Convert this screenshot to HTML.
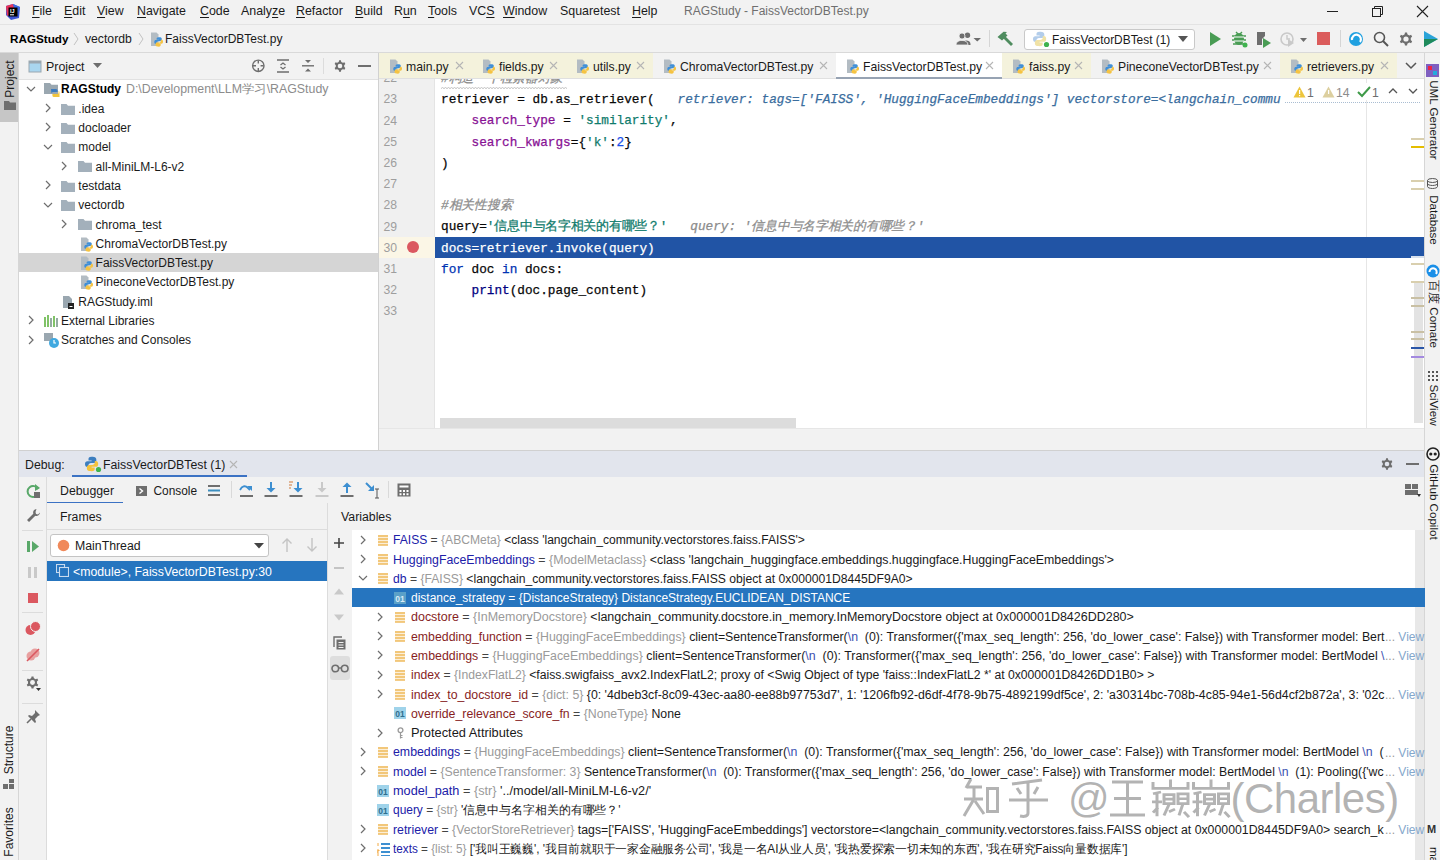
<!DOCTYPE html>
<html><head><meta charset="utf-8"><title>IDE</title><style>
*{box-sizing:border-box}
body{margin:0;width:1440px;height:860px;overflow:hidden;background:#f2f2f2;font-family:"Liberation Sans",sans-serif;font-size:12px;color:#000;position:relative}
.a{position:absolute}
.t{position:absolute;white-space:pre;overflow:visible}
.m{font-family:"Liberation Mono",monospace;-webkit-text-stroke:0.25px currentColor}
.cj{display:inline-block;overflow:hidden;white-space:nowrap;vertical-align:top}
.c{display:inline-block;text-align:center}
u{text-decoration:underline;text-underline-offset:2px}
</style></head><body>
<div class="a" style="left:0px;top:0px;width:1440px;height:24px;background:#f2f2f2;"></div>
<div class="a" style="left:0px;top:24px;width:1440px;height:1px;background:#e3e3e3;"></div>
<svg class="a" style="left:4px;top:3px;" width="18" height="18" viewBox="0 0 18 18"><path d="M2 3l7-2 7 3-1 11-8 2-5-5z" fill="#3d55d6"/><path d="M2 3l7-2 2 8-8 4z" fill="#e8335a"/><path d="M9 1l7 3-3 9z" fill="#3a6be0"/><rect x="4.5" y="4.5" width="9" height="9" fill="#000"/><rect x="6" y="11.3" width="4" height="1" fill="#fff"/><text x="6" y="10" font-size="5.5" font-weight="bold" fill="#fff" font-family="Liberation Sans">IJ</text></svg>
<div class="t" style="left:32px;top:-0.6px;height:24px;line-height:24px;font-size:12.4px;color:#1a1a1a;"><u>F</u>ile</div>
<div class="t" style="left:64px;top:-0.6px;height:24px;line-height:24px;font-size:12.4px;color:#1a1a1a;"><u>E</u>dit</div>
<div class="t" style="left:97px;top:-0.6px;height:24px;line-height:24px;font-size:12.4px;color:#1a1a1a;"><u>V</u>iew</div>
<div class="t" style="left:137px;top:-0.6px;height:24px;line-height:24px;font-size:12.4px;color:#1a1a1a;"><u>N</u>avigate</div>
<div class="t" style="left:200px;top:-0.6px;height:24px;line-height:24px;font-size:12.4px;color:#1a1a1a;"><u>C</u>ode</div>
<div class="t" style="left:241px;top:-0.6px;height:24px;line-height:24px;font-size:12.4px;color:#1a1a1a;">Analy<u>z</u>e</div>
<div class="t" style="left:296px;top:-0.6px;height:24px;line-height:24px;font-size:12.4px;color:#1a1a1a;"><u>R</u>efactor</div>
<div class="t" style="left:355px;top:-0.6px;height:24px;line-height:24px;font-size:12.4px;color:#1a1a1a;"><u>B</u>uild</div>
<div class="t" style="left:394px;top:-0.6px;height:24px;line-height:24px;font-size:12.4px;color:#1a1a1a;">R<u>u</u>n</div>
<div class="t" style="left:428px;top:-0.6px;height:24px;line-height:24px;font-size:12.4px;color:#1a1a1a;"><u>T</u>ools</div>
<div class="t" style="left:469px;top:-0.6px;height:24px;line-height:24px;font-size:12.4px;color:#1a1a1a;">VC<u>S</u></div>
<div class="t" style="left:503px;top:-0.6px;height:24px;line-height:24px;font-size:12.4px;color:#1a1a1a;"><u>W</u>indow</div>
<div class="t" style="left:560px;top:-0.6px;height:24px;line-height:24px;font-size:12.4px;color:#1a1a1a;">Squaretest</div>
<div class="t" style="left:632px;top:-0.6px;height:24px;line-height:24px;font-size:12.4px;color:#1a1a1a;"><u>H</u>elp</div>
<div class="t" style="left:684px;top:-0.8px;height:24px;line-height:24px;font-size:12.0px;color:#6f6f6f;">RAGStudy - FaissVectorDBTest.py</div>
<div class="a" style="left:1327px;top:11px;width:11px;height:1px;background:#222;"></div>
<svg class="a" style="left:1371px;top:5px;" width="13" height="13" viewBox="0 0 13 13"><rect x="1.5" y="3.5" width="8" height="8" fill="none" stroke="#222"/><path d="M3.5 3.5V1.5h8v8h-2" fill="none" stroke="#222"/></svg>
<svg class="a" style="left:1416px;top:5px;" width="13" height="13" viewBox="0 0 13 13"><path d="M1 1L12 12M12 1L1 12" stroke="#222" stroke-width="1.1"/></svg>
<div class="a" style="left:0px;top:25px;width:1440px;height:28px;background:#f2f2f2;"></div>
<div class="a" style="left:0px;top:52px;width:1440px;height:1px;background:#d9d9d9;"></div>
<div class="t" style="left:10px;top:24.9px;height:28px;line-height:28px;font-size:11.7px;color:#000;font-weight:bold">RAGStudy</div>
<svg class="a" style="left:73px;top:32px;" width="6" height="14" viewBox="0 0 6 14"><polyline points="1,1 5,7 1,13" fill="none" stroke="#c2c2c2" stroke-width="1"/></svg>
<div class="t" style="left:85px;top:24.9px;height:28px;line-height:28px;font-size:12.2px;color:#1a1a1a;">vectordb</div>
<svg class="a" style="left:138px;top:32px;" width="6" height="14" viewBox="0 0 6 14"><polyline points="1,1 5,7 1,13" fill="none" stroke="#c2c2c2" stroke-width="1"/></svg>
<svg class="a" style="left:150px;top:32px;" width="15" height="15" viewBox="0 0 15 15"><path d="M1 0.5h5.5l2 2v11.5H1z" fill="#b3bcc3"/><g transform="translate(4.3,4.6) scale(0.66)"><path d="M6.5 0.8c-2.6 0-3 1.1-3 2.4v1.4h3.1v.6H2.3C1 5.2 0 6.1 0 8.1s.9 3 2.3 3h1.1V9.5c0-1.4 1.2-2.5 2.6-2.5h3.1c1.2 0 2.2-1 2.2-2.2V3.2c0-1.2-1-2.1-2.2-2.3-.8-.1-1.7-.1-2.6-.1z" fill="#3f8fd8"/><path d="M6.7 15.2c2.6 0 3-1.1 3-2.4v-1.4H6.6v-.6h4.3c1.3 0 2.300-.9 2.3-2.9s-.9-3-2.3-3H9.8v1.6c0 1.4-1.2 2.5-2.6 2.5H4.1c-1.2 0-2.2 1-2.2 2.2v1.6c0 1.2 1 2.1 2.2 2.3.8.1 1.7.1 2.6.1z" fill="#f5c342"/></g></svg>
<div class="t" style="left:165px;top:24.9px;height:28px;line-height:28px;font-size:12.0px;color:#1a1a1a;">FaissVectorDBTest.py</div>
<svg class="a" style="left:956px;top:31px;" width="26" height="15" viewBox="0 0 26 15"><circle cx="11.5" cy="4.2" r="2.7" fill="#6e6e6e"/><path d="M9 9.5c2.5-.5 5.5.5 5.5 3.5v1H11z" fill="#6e6e6e"/><circle cx="6" cy="5" r="3" fill="#6e6e6e" stroke="#f2f2f2" stroke-width="0.8"/><path d="M0 14c0-3 2.5-4.6 6-4.6s6 1.6 6 4.6z" fill="#6e6e6e" stroke="#f2f2f2" stroke-width="0.8"/><path d="M17.5 7h7.5l-3.75 3.5z" fill="#6e6e6e"/></svg>
<div class="a" style="left:989px;top:30px;width:1px;height:17px;background:#d5d5d5;"></div>
<svg class="a" style="left:997px;top:31px;" width="18" height="16" viewBox="0 0 18 16"><path d="M0.5 6L6.5 0.8 10 1 8.5 2.5 10.5 4.5 5 9.5z" fill="#4f8c5f"/><path d="M7.5 6.5L15 14" stroke="#4f8c5f" stroke-width="2.8"/></svg>
<div class="a" style="left:1024px;top:29px;width:171px;height:21px;background:#fff;border:1px solid #c9c9c9;border-radius:3px"></div>
<svg class="a" style="left:1033px;top:31px;" width="17" height="17" viewBox="0 0 17 17"><path d="M6.5 0.8c-2.6 0-3 1.1-3 2.4v1.4h3.1v.6H2.3C1 5.2 0 6.1 0 8.1s.9 3 2.3 3h1.1V9.5c0-1.4 1.2-2.5 2.6-2.5h3.1c1.2 0 2.2-1 2.2-2.2V3.2c0-1.2-1-2.1-2.2-2.3-.8-.1-1.7-.1-2.6-.1z" fill="#b3cdea"/><path d="M6.7 15.2c2.6 0 3-1.1 3-2.4v-1.4H6.6v-.6h4.3c1.3 0 2.3-.9 2.3-2.9s-.9-3-2.3-3H9.8v1.6c0 1.4-1.2 2.5-2.6 2.5H4.1c-1.2 0-2.2 1-2.2 2.2v1.6c0 1.2 1 2.1 2.2 2.3.8.1 1.7.1 2.6.1z" fill="#f0e2a6"/><circle cx="13.5" cy="13.5" r="2.6" fill="#3fb34f"/></svg>
<div class="t" style="left:1052px;top:30.2px;height:21px;line-height:21px;font-size:11.9px;color:#1a1a1a;">FaissVectorDBTest (1)</div>
<svg class="a" style="left:1178px;top:36px;" width="11" height="7" viewBox="0 0 11 7"><path d="M0 0h10l-5 6z" fill="#555"/></svg>
<svg class="a" style="left:1208px;top:31px;" width="14" height="16" viewBox="0 0 14 16"><path d="M2 1l11 7-11 7z" fill="#499c54"/></svg>
<svg class="a" style="left:1231px;top:30px;" width="17" height="18" viewBox="0 0 17 18"><ellipse cx="8" cy="9" rx="5" ry="6" fill="#499c54"/><path d="M1 6h14M1 10h14M2 14h12M5 2l2 2M11 2l-2 2" stroke="#499c54" stroke-width="1.4"/><path d="M3 7h10M3 11h10" stroke="#fff" stroke-width="1"/><circle cx="14" cy="15" r="2.5" fill="#3fb34f"/></svg>
<svg class="a" style="left:1255px;top:30px;" width="17" height="18" viewBox="0 0 17 18"><path d="M2 2h8v4l-3 3v6H2z" fill="#6e6e6e"/><path d="M8 8l8 5-8 5z" fill="#499c54"/></svg>
<svg class="a" style="left:1279px;top:30px;" width="30" height="18" viewBox="0 0 30 18"><circle cx="8" cy="9" r="6" fill="none" stroke="#c9c9c9" stroke-width="1.6"/><path d="M8 5v4h3" stroke="#c9c9c9" stroke-width="1.4" fill="none"/><path d="M9 9l6 4-6 4z" fill="#c9c9c9"/><path d="M21 8h7l-3.5 4z" fill="#6e6e6e"/></svg>
<div class="a" style="left:1317px;top:32px;width:13px;height:13px;background:#db5c5c;"></div>
<div class="a" style="left:1340px;top:30px;width:1px;height:17px;background:#d5d5d5;"></div>
<svg class="a" style="left:1348px;top:31px;" width="16" height="16" viewBox="0 0 16 16"><circle cx="8" cy="8" r="7" fill="#1fa0e0"/><path d="M4 9a4.5 4.5 0 1 1 8 2" stroke="#fff" stroke-width="2.2" fill="none"/></svg>
<svg class="a" style="left:1373px;top:31px;" width="16" height="16" viewBox="0 0 16 16"><circle cx="6.5" cy="6.5" r="5" fill="none" stroke="#555" stroke-width="1.6"/><path d="M10 10l5 5" stroke="#555" stroke-width="2"/></svg>
<svg class="a" style="left:1398px;top:31px;" width="16" height="16" viewBox="0 0 16 16"><path d="M6.66 3.16 L6.94 1.53 L9.06 1.53 L9.34 3.16 L10.36 3.91 L11.52 4.42 L13.08 3.85 L14.14 5.68 L12.86 6.74 L12.72 8.00 L12.86 9.26 L14.14 10.32 L13.08 12.15 L11.52 11.58 L10.36 12.09 L9.34 12.84 L9.06 14.47 L6.94 14.47 L6.66 12.84 L5.64 12.09 L4.48 11.58 L2.92 12.15 L1.86 10.32 L3.14 9.26 L3.28 8.00 L3.14 6.74 L1.86 5.68 L2.92 3.85 L4.48 4.42 L5.64 3.91Z" fill="#6e6e6e"/><circle cx="8.0" cy="8.0" r="2.62" fill="#f2f2f2"/></svg>
<svg class="a" style="left:1422px;top:30px;" width="18" height="18" viewBox="0 0 18 18"><path d="M2 1l14 8-14 8z" fill="#2aa3d8"/><path d="M2 9l14 0-14 8z" fill="#1f8a5a"/></svg>
<div class="a" style="left:0px;top:53px;width:19px;height:807px;background:#f2f2f2;"></div>
<div class="a" style="left:18px;top:53px;width:1px;height:807px;background:#d6d6d6;"></div>
<div class="a" style="left:0px;top:53px;width:18px;height:69px;background:#c6c6c6;"></div>
<div class="t" style="left:-21px;top:70.2px;height:18px;line-height:18px;font-size:12px;color:#1a1a1a;transform:rotate(-90deg);transform-origin:center;width:62px;text-align:center">Project</div>
<svg class="a" style="left:4px;top:101px;" width="12" height="9" viewBox="0 0 12 9"><path d="M0 0h5l1 1.5h6V10H0z" fill="#6e6e6e"/></svg>
<div class="t" style="left:-25px;top:741.2px;height:18px;line-height:18px;font-size:12px;color:#1a1a1a;transform:rotate(-90deg);width:68px;text-align:center">Structure</div>
<svg class="a" style="left:3px;top:779px;" width="12" height="10" viewBox="0 0 12 10"><rect x="0" y="5" width="5" height="5" fill="#6e6e6e"/><rect x="6" y="5" width="5" height="5" fill="#6e6e6e"/><rect x="6" y="0" width="5" height="4" fill="#6e6e6e"/></svg>
<div class="t" style="left:-22px;top:823.2px;height:18px;line-height:18px;font-size:12px;color:#1a1a1a;transform:rotate(-90deg);width:62px;text-align:center">Favorites</div>
<div class="a" style="left:19px;top:53px;width:359px;height:26px;background:#f2f2f2;"></div>
<div class="a" style="left:19px;top:79px;width:359px;height:1px;background:#e1e1e1;"></div>
<div class="a" style="left:19px;top:80px;width:359px;height:370px;background:#ffffff;"></div>
<div class="a" style="left:378px;top:53px;width:1px;height:397px;background:#d1d1d1;"></div>
<svg class="a" style="left:28px;top:60px;" width="14" height="13" viewBox="0 0 14 13"><rect x="0.5" y="0.5" width="13" height="12" fill="#9aa7b0"/><rect x="1.5" y="3.5" width="11" height="8" fill="#a9d6ef"/></svg>
<div class="t" style="left:46px;top:54.2px;height:26px;line-height:26px;font-size:12.4px;color:#1a1a1a;">Project</div>
<svg class="a" style="left:93px;top:63px;" width="10" height="6" viewBox="0 0 10 6"><path d="M0 0h9l-4.5 5z" fill="#6e6e6e"/></svg>
<svg class="a" style="left:251px;top:59px;" width="15" height="14" viewBox="0 0 15 14"><circle cx="7.3" cy="6.8" r="5.7" fill="none" stroke="#6e6e6e" stroke-width="1.4"/><path d="M7.3 1.5v3M7.3 9v3M2 6.8h3M9.6 6.8h3" stroke="#6e6e6e" stroke-width="1.4"/></svg>
<svg class="a" style="left:277px;top:59px;" width="12" height="14" viewBox="0 0 12 14"><path d="M0 1h12M0 13h12" stroke="#6e6e6e" stroke-width="1.4"/><path d="M3.5 6l2.5-2 2.5 2M3.5 8l2.5 2 2.5-2" stroke="#6e6e6e" stroke-width="1.3" fill="none"/></svg>
<svg class="a" style="left:302px;top:59px;" width="12" height="14" viewBox="0 0 12 14"><path d="M0 6.8h12" stroke="#6e6e6e" stroke-width="1.4"/><path d="M3 1h6L6 4zM3 12.6h6L6 9.6z" fill="#6e6e6e"/></svg>
<div class="a" style="left:323px;top:58px;width:1px;height:16px;background:#dcdcdc;"></div>
<svg class="a" style="left:333px;top:59px;" width="14" height="14" viewBox="0 0 14 14"><path d="M5.82 2.73 L6.07 1.34 L7.93 1.34 L8.18 2.73 L9.07 3.42 L10.11 3.84 L11.44 3.37 L12.37 4.97 L11.29 5.89 L11.13 7.00 L11.29 8.11 L12.37 9.03 L11.44 10.63 L10.11 10.16 L9.07 10.58 L8.18 11.27 L7.93 12.66 L6.07 12.66 L5.82 11.27 L4.93 10.58 L3.89 10.16 L2.56 10.63 L1.63 9.03 L2.71 8.11 L2.87 7.00 L2.71 5.89 L1.63 4.97 L2.56 3.37 L3.89 3.84 L4.93 3.42Z" fill="#6e6e6e"/><circle cx="7.0" cy="7.0" r="2.30" fill="#f2f2f2"/></svg>
<div class="a" style="left:358px;top:65px;width:13px;height:1.6px;background:#6e6e6e;"></div>
<svg class="a" style="left:26.0px;top:85.0px;" width="10" height="8" viewBox="0 0 10 8"><polyline points="1,2 5,6 9,2" fill="none" stroke="#6e6e6e" stroke-width="1.2"/></svg>
<svg class="a" style="left:44px;top:81.2px;" width="16" height="16" viewBox="0 0 16 16"><path d="M0 2h6l1.5 1.8H14V13H0z" fill="#9aa7b0"/><path d="M7 8h5a1.6 1.6 0 0 1 1.6 1.6V11H9a1.6 1.6 0 0 0-1.6 1.6z" fill="#3b7bbf"/><path d="M15.5 16H10a1.6 1.6 0 0 1-1.6-1.6V13H13a1.6 1.6 0 0 0 1.6-1.6V10a1.5 1.5 0 0 1 .9 1.4z" fill="#f2c53d"/></svg>
<div class="t" style="left:61.0px;top:80.4px;height:19.3px;line-height:19.3px;font-size:12px;color:#000;font-weight:bold">RAGStudy</div>
<div class="t" style="left:126px;top:80.4px;height:19.3px;line-height:19.3px;font-size:12px;color:#8c8c8c;transform:scaleX(1.029);transform-origin:0 0">D:\Development\LLM<span class="c" style="width:12px">学</span><span class="c" style="width:12px">习</span>\RAGStudy</div>
<svg class="a" style="left:43.5px;top:103.1px;" width="8" height="10" viewBox="0 0 8 10"><polyline points="2,1 6,5 2,9" fill="none" stroke="#6e6e6e" stroke-width="1.2"/></svg>
<svg class="a" style="left:61px;top:102.5px;" width="14" height="12" viewBox="0 0 14 12"><path d="M0 1h5.5l1.5 1.8H14V12H0z" fill="#a3b0bb"/></svg>
<div class="t" style="left:78.3px;top:99.7px;height:19.3px;line-height:19.3px;font-size:12px;color:#1a1a1a;">.idea</div>
<svg class="a" style="left:43.5px;top:122.4px;" width="8" height="10" viewBox="0 0 8 10"><polyline points="2,1 6,5 2,9" fill="none" stroke="#6e6e6e" stroke-width="1.2"/></svg>
<svg class="a" style="left:61px;top:121.80000000000001px;" width="14" height="12" viewBox="0 0 14 12"><path d="M0 1h5.5l1.5 1.8H14V12H0z" fill="#a3b0bb"/></svg>
<div class="t" style="left:78.3px;top:119.0px;height:19.3px;line-height:19.3px;font-size:12px;color:#1a1a1a;">docloader</div>
<svg class="a" style="left:42.5px;top:142.90000000000003px;" width="10" height="8" viewBox="0 0 10 8"><polyline points="1,2 5,6 9,2" fill="none" stroke="#6e6e6e" stroke-width="1.2"/></svg>
<svg class="a" style="left:61px;top:141.10000000000002px;" width="14" height="12" viewBox="0 0 14 12"><path d="M0 1h5.5l1.5 1.8H14V12H0z" fill="#a3b0bb"/></svg>
<div class="t" style="left:78.3px;top:138.3px;height:19.3px;line-height:19.3px;font-size:12px;color:#1a1a1a;">model</div>
<svg class="a" style="left:60.0px;top:161.0px;" width="8" height="10" viewBox="0 0 8 10"><polyline points="2,1 6,5 2,9" fill="none" stroke="#6e6e6e" stroke-width="1.2"/></svg>
<svg class="a" style="left:78px;top:160.4px;" width="14" height="12" viewBox="0 0 14 12"><path d="M0 1h5.5l1.5 1.8H14V12H0z" fill="#a3b0bb"/></svg>
<div class="t" style="left:95.6px;top:157.6px;height:19.3px;line-height:19.3px;font-size:12px;color:#1a1a1a;">all-MiniLM-L6-v2</div>
<svg class="a" style="left:43.5px;top:180.29999999999998px;" width="8" height="10" viewBox="0 0 8 10"><polyline points="2,1 6,5 2,9" fill="none" stroke="#6e6e6e" stroke-width="1.2"/></svg>
<svg class="a" style="left:61px;top:179.7px;" width="14" height="12" viewBox="0 0 14 12"><path d="M0 1h5.5l1.5 1.8H14V12H0z" fill="#a3b0bb"/></svg>
<div class="t" style="left:78.3px;top:176.9px;height:19.3px;line-height:19.3px;font-size:12px;color:#1a1a1a;">testdata</div>
<svg class="a" style="left:42.5px;top:200.8px;" width="10" height="8" viewBox="0 0 10 8"><polyline points="1,2 5,6 9,2" fill="none" stroke="#6e6e6e" stroke-width="1.2"/></svg>
<svg class="a" style="left:61px;top:199.0px;" width="14" height="12" viewBox="0 0 14 12"><path d="M0 1h5.5l1.5 1.8H14V12H0z" fill="#a3b0bb"/></svg>
<div class="t" style="left:78.3px;top:196.2px;height:19.3px;line-height:19.3px;font-size:12px;color:#1a1a1a;">vectordb</div>
<svg class="a" style="left:60.0px;top:218.9px;" width="8" height="10" viewBox="0 0 8 10"><polyline points="2,1 6,5 2,9" fill="none" stroke="#6e6e6e" stroke-width="1.2"/></svg>
<svg class="a" style="left:78px;top:218.3px;" width="14" height="12" viewBox="0 0 14 12"><path d="M0 1h5.5l1.5 1.8H14V12H0z" fill="#a3b0bb"/></svg>
<div class="t" style="left:95.6px;top:215.5px;height:19.3px;line-height:19.3px;font-size:12px;color:#1a1a1a;">chroma_test</div>
<svg class="a" style="left:80px;top:236.60000000000002px;" width="15" height="15" viewBox="0 0 15 15"><path d="M1 0.5h5.5l2 2v11.5H1z" fill="#b3bcc3"/><g transform="translate(4.3,4.6) scale(0.66)"><path d="M6.5 0.8c-2.6 0-3 1.1-3 2.4v1.4h3.1v.6H2.3C1 5.2 0 6.1 0 8.1s.9 3 2.3 3h1.1V9.5c0-1.4 1.2-2.5 2.6-2.5h3.1c1.2 0 2.2-1 2.2-2.2V3.2c0-1.2-1-2.1-2.2-2.3-.8-.1-1.7-.1-2.6-.1z" fill="#3f8fd8"/><path d="M6.7 15.2c2.6 0 3-1.1 3-2.4v-1.4H6.6v-.6h4.3c1.3 0 2.300-.9 2.3-2.9s-.9-3-2.3-3H9.8v1.6c0 1.4-1.2 2.5-2.6 2.5H4.1c-1.2 0-2.2 1-2.2 2.2v1.6c0 1.2 1 2.1 2.2 2.3.8.1 1.7.1 2.6.1z" fill="#f5c342"/></g></svg>
<div class="t" style="left:95.6px;top:234.8px;height:19.3px;line-height:19.3px;font-size:12px;color:#1a1a1a;">ChromaVectorDBTest.py</div>
<div class="a" style="left:19px;top:252.90000000000003px;width:359px;height:19.3px;background:#d5d5d5;"></div>
<svg class="a" style="left:80px;top:255.90000000000003px;" width="15" height="15" viewBox="0 0 15 15"><path d="M1 0.5h5.5l2 2v11.5H1z" fill="#b3bcc3"/><g transform="translate(4.3,4.6) scale(0.66)"><path d="M6.5 0.8c-2.6 0-3 1.1-3 2.4v1.4h3.1v.6H2.3C1 5.2 0 6.1 0 8.1s.9 3 2.3 3h1.1V9.5c0-1.4 1.2-2.5 2.6-2.5h3.1c1.2 0 2.2-1 2.2-2.2V3.2c0-1.2-1-2.1-2.2-2.3-.8-.1-1.7-.1-2.6-.1z" fill="#3f8fd8"/><path d="M6.7 15.2c2.6 0 3-1.1 3-2.4v-1.4H6.6v-.6h4.3c1.3 0 2.300-.9 2.3-2.9s-.9-3-2.3-3H9.8v1.6c0 1.4-1.2 2.5-2.6 2.5H4.1c-1.2 0-2.2 1-2.2 2.2v1.6c0 1.2 1 2.1 2.2 2.3.8.1 1.7.1 2.6.1z" fill="#f5c342"/></g></svg>
<div class="t" style="left:95.6px;top:254.1px;height:19.3px;line-height:19.3px;font-size:12px;color:#1a1a1a;">FaissVectorDBTest.py</div>
<svg class="a" style="left:80px;top:275.2px;" width="15" height="15" viewBox="0 0 15 15"><path d="M1 0.5h5.5l2 2v11.5H1z" fill="#b3bcc3"/><g transform="translate(4.3,4.6) scale(0.66)"><path d="M6.5 0.8c-2.6 0-3 1.1-3 2.4v1.4h3.1v.6H2.3C1 5.2 0 6.1 0 8.1s.9 3 2.3 3h1.1V9.5c0-1.4 1.2-2.5 2.6-2.5h3.1c1.2 0 2.2-1 2.2-2.2V3.2c0-1.2-1-2.1-2.2-2.3-.8-.1-1.7-.1-2.6-.1z" fill="#3f8fd8"/><path d="M6.7 15.2c2.6 0 3-1.1 3-2.4v-1.4H6.6v-.6h4.3c1.3 0 2.300-.9 2.3-2.9s-.9-3-2.3-3H9.8v1.6c0 1.4-1.2 2.5-2.6 2.5H4.1c-1.2 0-2.2 1-2.2 2.2v1.6c0 1.2 1 2.1 2.2 2.3.8.1 1.7.1 2.6.1z" fill="#f5c342"/></g></svg>
<div class="t" style="left:95.6px;top:273.4px;height:19.3px;line-height:19.3px;font-size:12px;color:#1a1a1a;">PineconeVectorDBTest.py</div>
<svg class="a" style="left:62px;top:294.5px;" width="13" height="14" viewBox="0 0 13 14"><path d="M1 1h6l3 3v9H1z" fill="#9aa7b0"/><rect x="6" y="8" width="6" height="6" fill="#222"/><rect x="7.5" y="11" width="3" height="1" fill="#fff"/></svg>
<div class="t" style="left:78.3px;top:292.7px;height:19.3px;line-height:19.3px;font-size:12px;color:#1a1a1a;">RAGStudy.iml</div>
<svg class="a" style="left:27.0px;top:315.40000000000003px;" width="8" height="10" viewBox="0 0 8 10"><polyline points="2,1 6,5 2,9" fill="none" stroke="#6e6e6e" stroke-width="1.2"/></svg>
<svg class="a" style="left:44px;top:314.8px;" width="15" height="12" viewBox="0 0 15 12"><path d="M1 2v10M4 0v12M7 3v9M10 1v11M13 3v9" stroke="#62b543" stroke-width="1.6"/><path d="M7 3v9M13 3v9" stroke="#9aa7b0" stroke-width="1.6"/></svg>
<div class="t" style="left:61.0px;top:312.0px;height:19.3px;line-height:19.3px;font-size:12px;color:#1a1a1a;">External Libraries</div>
<svg class="a" style="left:27.0px;top:334.70000000000005px;" width="8" height="10" viewBox="0 0 8 10"><polyline points="2,1 6,5 2,9" fill="none" stroke="#6e6e6e" stroke-width="1.2"/></svg>
<svg class="a" style="left:44px;top:332.1px;" width="16" height="17" viewBox="0 0 16 17"><path d="M0 1h9v8H0z" fill="#9aa7b0"/><circle cx="10" cy="11" r="5" fill="#40a9e0"/><path d="M10 8v3h2" stroke="#fff" stroke-width="1.2" fill="none"/></svg>
<div class="t" style="left:61.0px;top:331.3px;height:19.3px;line-height:19.3px;font-size:12px;color:#1a1a1a;">Scratches and Consoles</div>
<div class="a" style="left:379px;top:53px;width:1045px;height:25px;background:#f2f2f2;"></div>
<div class="a" style="left:379px;top:78px;width:1045px;height:1px;background:#e0e0e0;"></div>
<div class="a" style="left:379px;top:53px;width:93px;height:25px;background:#f4f2dc;"></div>
<svg class="a" style="left:389px;top:59px;" width="15" height="15" viewBox="0 0 15 15"><path d="M1 0.5h5.5l2 2v11.5H1z" fill="#b3bcc3"/><g transform="translate(4.3,4.6) scale(0.66)"><path d="M6.5 0.8c-2.6 0-3 1.1-3 2.4v1.4h3.1v.6H2.3C1 5.2 0 6.1 0 8.1s.9 3 2.3 3h1.1V9.5c0-1.4 1.2-2.5 2.6-2.5h3.1c1.2 0 2.2-1 2.2-2.2V3.2c0-1.2-1-2.1-2.2-2.3-.8-.1-1.7-.1-2.6-.1z" fill="#3f8fd8"/><path d="M6.7 15.2c2.6 0 3-1.1 3-2.4v-1.4H6.6v-.6h4.3c1.3 0 2.300-.9 2.3-2.9s-.9-3-2.3-3H9.8v1.6c0 1.4-1.2 2.5-2.6 2.5H4.1c-1.2 0-2.2 1-2.2 2.2v1.6c0 1.2 1 2.1 2.2 2.3.8.1 1.7.1 2.6.1z" fill="#f5c342"/></g></svg>
<div class="t" style="left:406px;top:54.9px;height:25px;line-height:25px;font-size:12.2px;color:#1a1a1a;">main.py</div>
<svg class="a" style="left:455px;top:61px;" width="9" height="9" viewBox="0 0 9 9"><path d="M1 1L8 8M8 1L1 8" stroke="#b5b5b5" stroke-width="1.1"/></svg>
<div class="a" style="left:472px;top:53px;width:94px;height:25px;background:#f4f2dc;"></div>
<svg class="a" style="left:482px;top:59px;" width="15" height="15" viewBox="0 0 15 15"><path d="M1 0.5h5.5l2 2v11.5H1z" fill="#b3bcc3"/><g transform="translate(4.3,4.6) scale(0.66)"><path d="M6.5 0.8c-2.6 0-3 1.1-3 2.4v1.4h3.1v.6H2.3C1 5.2 0 6.1 0 8.1s.9 3 2.3 3h1.1V9.5c0-1.4 1.2-2.5 2.6-2.5h3.1c1.2 0 2.2-1 2.2-2.2V3.2c0-1.2-1-2.1-2.2-2.3-.8-.1-1.7-.1-2.6-.1z" fill="#3f8fd8"/><path d="M6.7 15.2c2.6 0 3-1.1 3-2.4v-1.4H6.6v-.6h4.3c1.3 0 2.300-.9 2.3-2.9s-.9-3-2.3-3H9.8v1.6c0 1.4-1.2 2.5-2.6 2.5H4.1c-1.2 0-2.2 1-2.2 2.2v1.6c0 1.2 1 2.1 2.2 2.3.8.1 1.7.1 2.6.1z" fill="#f5c342"/></g></svg>
<div class="t" style="left:499px;top:54.9px;height:25px;line-height:25px;font-size:12.2px;color:#1a1a1a;">fields.py</div>
<svg class="a" style="left:549px;top:61px;" width="9" height="9" viewBox="0 0 9 9"><path d="M1 1L8 8M8 1L1 8" stroke="#b5b5b5" stroke-width="1.1"/></svg>
<div class="a" style="left:566px;top:53px;width:87px;height:25px;background:#f4f2dc;"></div>
<svg class="a" style="left:576px;top:59px;" width="15" height="15" viewBox="0 0 15 15"><path d="M1 0.5h5.5l2 2v11.5H1z" fill="#b3bcc3"/><g transform="translate(4.3,4.6) scale(0.66)"><path d="M6.5 0.8c-2.6 0-3 1.1-3 2.4v1.4h3.1v.6H2.3C1 5.2 0 6.1 0 8.1s.9 3 2.3 3h1.1V9.5c0-1.4 1.2-2.5 2.6-2.5h3.1c1.2 0 2.2-1 2.2-2.2V3.2c0-1.2-1-2.1-2.2-2.3-.8-.1-1.7-.1-2.6-.1z" fill="#3f8fd8"/><path d="M6.7 15.2c2.6 0 3-1.1 3-2.4v-1.4H6.6v-.6h4.3c1.3 0 2.300-.9 2.3-2.9s-.9-3-2.3-3H9.8v1.6c0 1.4-1.2 2.5-2.6 2.5H4.1c-1.2 0-2.2 1-2.2 2.2v1.6c0 1.2 1 2.1 2.2 2.3.8.1 1.7.1 2.6.1z" fill="#f5c342"/></g></svg>
<div class="t" style="left:593px;top:54.9px;height:25px;line-height:25px;font-size:12.2px;color:#1a1a1a;">utils.py</div>
<svg class="a" style="left:636px;top:61px;" width="9" height="9" viewBox="0 0 9 9"><path d="M1 1L8 8M8 1L1 8" stroke="#b5b5b5" stroke-width="1.1"/></svg>
<div class="a" style="left:653px;top:53px;width:183px;height:25px;background:#f2f2f2;"></div>
<svg class="a" style="left:663px;top:59px;" width="15" height="15" viewBox="0 0 15 15"><path d="M1 0.5h5.5l2 2v11.5H1z" fill="#b3bcc3"/><g transform="translate(4.3,4.6) scale(0.66)"><path d="M6.5 0.8c-2.6 0-3 1.1-3 2.4v1.4h3.1v.6H2.3C1 5.2 0 6.1 0 8.1s.9 3 2.3 3h1.1V9.5c0-1.4 1.2-2.5 2.6-2.5h3.1c1.2 0 2.2-1 2.2-2.2V3.2c0-1.2-1-2.1-2.2-2.3-.8-.1-1.7-.1-2.6-.1z" fill="#3f8fd8"/><path d="M6.7 15.2c2.6 0 3-1.1 3-2.4v-1.4H6.6v-.6h4.3c1.3 0 2.300-.9 2.3-2.9s-.9-3-2.3-3H9.8v1.6c0 1.4-1.2 2.5-2.6 2.5H4.1c-1.2 0-2.2 1-2.2 2.2v1.6c0 1.2 1 2.1 2.2 2.3.8.1 1.7.1 2.6.1z" fill="#f5c342"/></g></svg>
<div class="t" style="left:680px;top:54.9px;height:25px;line-height:25px;font-size:12.2px;color:#1a1a1a;">ChromaVectorDBTest.py</div>
<svg class="a" style="left:819px;top:61px;" width="9" height="9" viewBox="0 0 9 9"><path d="M1 1L8 8M8 1L1 8" stroke="#b5b5b5" stroke-width="1.1"/></svg>
<div class="a" style="left:836px;top:53px;width:166px;height:25px;background:#ffffff;"></div>
<svg class="a" style="left:846px;top:59px;" width="15" height="15" viewBox="0 0 15 15"><path d="M1 0.5h5.5l2 2v11.5H1z" fill="#b3bcc3"/><g transform="translate(4.3,4.6) scale(0.66)"><path d="M6.5 0.8c-2.6 0-3 1.1-3 2.4v1.4h3.1v.6H2.3C1 5.2 0 6.1 0 8.1s.9 3 2.3 3h1.1V9.5c0-1.4 1.2-2.5 2.6-2.5h3.1c1.2 0 2.2-1 2.2-2.2V3.2c0-1.2-1-2.1-2.2-2.3-.8-.1-1.7-.1-2.6-.1z" fill="#3f8fd8"/><path d="M6.7 15.2c2.6 0 3-1.1 3-2.4v-1.4H6.6v-.6h4.3c1.3 0 2.300-.9 2.3-2.9s-.9-3-2.3-3H9.8v1.6c0 1.4-1.2 2.5-2.6 2.5H4.1c-1.2 0-2.2 1-2.2 2.2v1.6c0 1.2 1 2.1 2.2 2.3.8.1 1.7.1 2.6.1z" fill="#f5c342"/></g></svg>
<div class="t" style="left:863px;top:54.9px;height:25px;line-height:25px;font-size:12.2px;color:#1a1a1a;">FaissVectorDBTest.py</div>
<svg class="a" style="left:985px;top:61px;" width="9" height="9" viewBox="0 0 9 9"><path d="M1 1L8 8M8 1L1 8" stroke="#b5b5b5" stroke-width="1.1"/></svg>
<div class="a" style="left:1002px;top:53px;width:89px;height:25px;background:#f4f2dc;"></div>
<svg class="a" style="left:1012px;top:59px;" width="15" height="15" viewBox="0 0 15 15"><path d="M1 0.5h5.5l2 2v11.5H1z" fill="#b3bcc3"/><g transform="translate(4.3,4.6) scale(0.66)"><path d="M6.5 0.8c-2.6 0-3 1.1-3 2.4v1.4h3.1v.6H2.3C1 5.2 0 6.1 0 8.1s.9 3 2.3 3h1.1V9.5c0-1.4 1.2-2.5 2.6-2.5h3.1c1.2 0 2.2-1 2.2-2.2V3.2c0-1.2-1-2.1-2.2-2.3-.8-.1-1.7-.1-2.6-.1z" fill="#3f8fd8"/><path d="M6.7 15.2c2.6 0 3-1.1 3-2.4v-1.4H6.6v-.6h4.3c1.3 0 2.300-.9 2.3-2.9s-.9-3-2.3-3H9.8v1.6c0 1.4-1.2 2.5-2.6 2.5H4.1c-1.2 0-2.2 1-2.2 2.2v1.6c0 1.2 1 2.1 2.2 2.3.8.1 1.7.1 2.6.1z" fill="#f5c342"/></g></svg>
<div class="t" style="left:1029px;top:54.9px;height:25px;line-height:25px;font-size:12.2px;color:#1a1a1a;">faiss.py</div>
<svg class="a" style="left:1074px;top:61px;" width="9" height="9" viewBox="0 0 9 9"><path d="M1 1L8 8M8 1L1 8" stroke="#b5b5b5" stroke-width="1.1"/></svg>
<div class="a" style="left:1091px;top:53px;width:189px;height:25px;background:#f2f2f2;"></div>
<svg class="a" style="left:1101px;top:59px;" width="15" height="15" viewBox="0 0 15 15"><path d="M1 0.5h5.5l2 2v11.5H1z" fill="#b3bcc3"/><g transform="translate(4.3,4.6) scale(0.66)"><path d="M6.5 0.8c-2.6 0-3 1.1-3 2.4v1.4h3.1v.6H2.3C1 5.2 0 6.1 0 8.1s.9 3 2.3 3h1.1V9.5c0-1.4 1.2-2.5 2.6-2.5h3.1c1.2 0 2.2-1 2.2-2.2V3.2c0-1.2-1-2.1-2.2-2.3-.8-.1-1.7-.1-2.6-.1z" fill="#3f8fd8"/><path d="M6.7 15.2c2.6 0 3-1.1 3-2.4v-1.4H6.6v-.6h4.3c1.3 0 2.300-.9 2.3-2.9s-.9-3-2.3-3H9.8v1.6c0 1.4-1.2 2.5-2.6 2.5H4.1c-1.2 0-2.2 1-2.2 2.2v1.6c0 1.2 1 2.1 2.2 2.3.8.1 1.7.1 2.6.1z" fill="#f5c342"/></g></svg>
<div class="t" style="left:1118px;top:54.9px;height:25px;line-height:25px;font-size:12.2px;color:#1a1a1a;">PineconeVectorDBTest.py</div>
<svg class="a" style="left:1263px;top:61px;" width="9" height="9" viewBox="0 0 9 9"><path d="M1 1L8 8M8 1L1 8" stroke="#b5b5b5" stroke-width="1.1"/></svg>
<div class="a" style="left:1280px;top:53px;width:117px;height:25px;background:#f4f2dc;"></div>
<svg class="a" style="left:1290px;top:59px;" width="15" height="15" viewBox="0 0 15 15"><path d="M1 0.5h5.5l2 2v11.5H1z" fill="#b3bcc3"/><g transform="translate(4.3,4.6) scale(0.66)"><path d="M6.5 0.8c-2.6 0-3 1.1-3 2.4v1.4h3.1v.6H2.3C1 5.2 0 6.1 0 8.1s.9 3 2.3 3h1.1V9.5c0-1.4 1.2-2.5 2.6-2.5h3.1c1.2 0 2.2-1 2.2-2.2V3.2c0-1.2-1-2.1-2.2-2.3-.8-.1-1.7-.1-2.6-.1z" fill="#3f8fd8"/><path d="M6.7 15.2c2.6 0 3-1.1 3-2.4v-1.4H6.6v-.6h4.3c1.3 0 2.300-.9 2.3-2.9s-.9-3-2.3-3H9.8v1.6c0 1.4-1.2 2.5-2.6 2.5H4.1c-1.2 0-2.2 1-2.2 2.2v1.6c0 1.2 1 2.1 2.2 2.3.8.1 1.7.1 2.6.1z" fill="#f5c342"/></g></svg>
<div class="t" style="left:1307px;top:54.9px;height:25px;line-height:25px;font-size:12.2px;color:#1a1a1a;">retrievers.py</div>
<svg class="a" style="left:1380px;top:61px;" width="9" height="9" viewBox="0 0 9 9"><path d="M1 1L8 8M8 1L1 8" stroke="#b5b5b5" stroke-width="1.1"/></svg>
<div class="a" style="left:836px;top:76.5px;width:166px;height:2.5px;background:#97a3b3;"></div>
<svg class="a" style="left:1405px;top:62px;" width="12" height="8" viewBox="0 0 12 8"><polyline points="1,1 6,6 11,1" fill="none" stroke="#555" stroke-width="1.5"/></svg>
<div class="a" style="left:379px;top:79px;width:1045px;height:349px;background:#ffffff;"></div>
<div class="a" style="left:379px;top:79px;width:56px;height:349px;background:#f0f0f0;"></div>
<div class="a" style="left:434px;top:79px;width:1px;height:349px;background:#e4e4e4;"></div>
<div class="a" style="left:1366px;top:79px;width:1px;height:349px;background:#e6e6e6;"></div>
<div class="a" style="left:379px;top:79px;width:1045px;height:349px;overflow:hidden">
<div class="a" style="left:-379px;top:-79px;width:1440px;height:860px">
<div class="t" style="left:379px;top:68.2px;height:21.2px;line-height:21.2px;font-size:12.2px;color:#9e9e9e;width:19px;text-align:right;left:378px">22</div>
<div class="t m" style="left:441px;top:68.0px;height:21.2px;line-height:21.2px;font-size:12.73px;color:#080808"><span style="color:#8c8c8c;font-style:italic">#</span><span style="color:#8c8c8c;font-style:italic"><span class="c" style="width:12.73px">构</span><span class="c" style="width:12.73px">造</span><span class="c" style="width:12.73px">一</span><span class="c" style="width:12.73px">个</span><span class="c" style="width:12.73px">检</span><span class="c" style="width:12.73px">索</span><span class="c" style="width:12.73px">器</span><span class="c" style="width:12.73px">对</span><span class="c" style="width:12.73px">象</span></span></div>
<div class="t" style="left:379px;top:89.4px;height:21.2px;line-height:21.2px;font-size:12.2px;color:#9e9e9e;width:19px;text-align:right;left:378px">23</div>
<div class="t m" style="left:441px;top:89.2px;height:21.2px;line-height:21.2px;font-size:12.73px;color:#080808">retriever = db.as_retriever(   <span style="color:#3a6d9e;font-style:italic">retriever: tags=['FAISS', 'HuggingFaceEmbeddings'] vectorstore=&lt;langchain_commu</span></div>
<div class="t" style="left:379px;top:110.6px;height:21.2px;line-height:21.2px;font-size:12.2px;color:#9e9e9e;width:19px;text-align:right;left:378px">24</div>
<div class="t m" style="left:441px;top:110.4px;height:21.2px;line-height:21.2px;font-size:12.73px;color:#080808">    <span style="color:#871094;">search_type</span> = <span style="color:#0f7b6c;">'similarity'</span>,</div>
<div class="t" style="left:379px;top:131.8px;height:21.2px;line-height:21.2px;font-size:12.2px;color:#9e9e9e;width:19px;text-align:right;left:378px">25</div>
<div class="t m" style="left:441px;top:131.6px;height:21.2px;line-height:21.2px;font-size:12.73px;color:#080808">    <span style="color:#871094;">search_kwargs</span>={<span style="color:#0f7b6c;">'k'</span>:<span style="color:#1750eb;">2</span>}</div>
<div class="t" style="left:379px;top:153.0px;height:21.2px;line-height:21.2px;font-size:12.2px;color:#9e9e9e;width:19px;text-align:right;left:378px">26</div>
<div class="t m" style="left:441px;top:152.8px;height:21.2px;line-height:21.2px;font-size:12.73px;color:#080808">)</div>
<div class="t" style="left:379px;top:174.2px;height:21.2px;line-height:21.2px;font-size:12.2px;color:#9e9e9e;width:19px;text-align:right;left:378px">27</div>
<div class="t m" style="left:441px;top:174.0px;height:21.2px;line-height:21.2px;font-size:12.73px;color:#080808"></div>
<div class="t" style="left:379px;top:195.4px;height:21.2px;line-height:21.2px;font-size:12.2px;color:#9e9e9e;width:19px;text-align:right;left:378px">28</div>
<div class="t m" style="left:441px;top:195.2px;height:21.2px;line-height:21.2px;font-size:12.73px;color:#080808"><span style="color:#8c8c8c;font-style:italic">#<span class="c" style="width:12.73px">相</span><span class="c" style="width:12.73px">关</span><span class="c" style="width:12.73px">性</span><span class="c" style="width:12.73px">搜</span><span class="c" style="width:12.73px">索</span></span></div>
<div class="t" style="left:379px;top:216.6px;height:21.2px;line-height:21.2px;font-size:12.2px;color:#9e9e9e;width:19px;text-align:right;left:378px">29</div>
<div class="t m" style="left:441px;top:216.4px;height:21.2px;line-height:21.2px;font-size:12.73px;color:#080808">query=<span style="color:#0f7b6c">'<span class="c" style="width:12.73px">信</span><span class="c" style="width:12.73px">息</span><span class="c" style="width:12.73px">中</span><span class="c" style="width:12.73px">与</span><span class="c" style="width:12.73px">名</span><span class="c" style="width:12.73px">字</span><span class="c" style="width:12.73px">相</span><span class="c" style="width:12.73px">关</span><span class="c" style="width:12.73px">的</span><span class="c" style="width:12.73px">有</span><span class="c" style="width:12.73px">哪</span><span class="c" style="width:12.73px">些</span><span class="c" style="width:12.73px">？</span>'</span>   <span style="color:#8c8c8c;font-style:italic">query: '<span class="c" style="width:12.73px">信</span><span class="c" style="width:12.73px">息</span><span class="c" style="width:12.73px">中</span><span class="c" style="width:12.73px">与</span><span class="c" style="width:12.73px">名</span><span class="c" style="width:12.73px">字</span><span class="c" style="width:12.73px">相</span><span class="c" style="width:12.73px">关</span><span class="c" style="width:12.73px">的</span><span class="c" style="width:12.73px">有</span><span class="c" style="width:12.73px">哪</span><span class="c" style="width:12.73px">些</span><span class="c" style="width:12.73px">？</span>'</span></div>
<div class="a" style="left:435px;top:236.6px;width:989px;height:21.2px;background:#2154a5;"></div>
<div class="a" style="left:379px;top:236.6px;width:56px;height:21.2px;background:#fbf6e6;"></div>
<div class="t" style="left:379px;top:237.8px;height:21.2px;line-height:21.2px;font-size:12.2px;color:#9e9e9e;width:19px;text-align:right;left:378px">30</div>
<div class="t m" style="left:441px;top:237.6px;height:21.2px;line-height:21.2px;font-size:12.73px;color:#080808"><span style="color:#fff">docs=retriever.invoke(query)</span></div>
<div class="t" style="left:379px;top:259.0px;height:21.2px;line-height:21.2px;font-size:12.2px;color:#9e9e9e;width:19px;text-align:right;left:378px">31</div>
<div class="t m" style="left:441px;top:258.79999999999995px;height:21.2px;line-height:21.2px;font-size:12.73px;color:#080808"><span style="color:#0033b3;">for</span> doc <span style="color:#0033b3;">in</span> docs:</div>
<div class="t" style="left:379px;top:280.2px;height:21.2px;line-height:21.2px;font-size:12.2px;color:#9e9e9e;width:19px;text-align:right;left:378px">32</div>
<div class="t m" style="left:441px;top:280.0px;height:21.2px;line-height:21.2px;font-size:12.73px;color:#080808">    <span style="color:#000080;">print</span>(doc.page_content)</div>
<div class="t" style="left:379px;top:301.4px;height:21.2px;line-height:21.2px;font-size:12.2px;color:#9e9e9e;width:19px;text-align:right;left:378px">33</div>
<div class="t m" style="left:441px;top:301.2px;height:21.2px;line-height:21.2px;font-size:12.73px;color:#080808"></div>
<svg class="a" style="left:441px;top:86px;" width="126" height="4" viewBox="0 0 126 4"><path d="M0 3l1.5-2 1.5 2M3 3l1.5-2 1.5 2M6 3l1.5-2 1.5 2M9 3l1.5-2 1.5 2M12 3l1.5-2 1.5 2M15 3l1.5-2 1.5 2M18 3l1.5-2 1.5 2M21 3l1.5-2 1.5 2M24 3l1.5-2 1.5 2M27 3l1.5-2 1.5 2M30 3l1.5-2 1.5 2M33 3l1.5-2 1.5 2M36 3l1.5-2 1.5 2M39 3l1.5-2 1.5 2M42 3l1.5-2 1.5 2M45 3l1.5-2 1.5 2M48 3l1.5-2 1.5 2M51 3l1.5-2 1.5 2M54 3l1.5-2 1.5 2M57 3l1.5-2 1.5 2M60 3l1.5-2 1.5 2M63 3l1.5-2 1.5 2M66 3l1.5-2 1.5 2M69 3l1.5-2 1.5 2M72 3l1.5-2 1.5 2M75 3l1.5-2 1.5 2M78 3l1.5-2 1.5 2M81 3l1.5-2 1.5 2M84 3l1.5-2 1.5 2M87 3l1.5-2 1.5 2M90 3l1.5-2 1.5 2M93 3l1.5-2 1.5 2M96 3l1.5-2 1.5 2M99 3l1.5-2 1.5 2M102 3l1.5-2 1.5 2M105 3l1.5-2 1.5 2M108 3l1.5-2 1.5 2M111 3l1.5-2 1.5 2M114 3l1.5-2 1.5 2M117 3l1.5-2 1.5 2M120 3l1.5-2 1.5 2M123 3l1.5-2 1.5 2" stroke="#c0c0c0" stroke-width="0.8" fill="none"/></svg>
<svg class="a" style="left:406px;top:240px;" width="14" height="14" viewBox="0 0 14 14"><circle cx="7" cy="7" r="6" fill="#db5860"/></svg>
</div></div>
<div class="a" style="left:1285px;top:102px;width:135px;height:0;border-top:1.5px dotted #a9bdd2"></div>
<div class="a" style="left:1286px;top:83px;width:136px;height:17px;background:#ffffff;"></div>
<svg class="a" style="left:1293px;top:86px;" width="13" height="12" viewBox="0 0 13 12"><path d="M6.5 0.5l6 11h-12z" fill="#edc53b"/><rect x="6" y="4" width="1.2" height="4" fill="#fff"/><rect x="6" y="9" width="1.2" height="1.2" fill="#fff"/></svg>
<div class="t" style="left:1307px;top:84.2px;height:19px;line-height:19px;font-size:12.2px;color:#6e6e6e;">1</div>
<svg class="a" style="left:1322px;top:86px;" width="13" height="12" viewBox="0 0 13 12"><path d="M6.5 0.5l6 11h-12z" fill="#dccf9f"/><rect x="6" y="4" width="1.2" height="4" fill="#fff"/></svg>
<div class="t" style="left:1336px;top:84.2px;height:19px;line-height:19px;font-size:12.2px;color:#8c8c8c;">14</div>
<svg class="a" style="left:1357px;top:86px;" width="14" height="12" viewBox="0 0 14 12"><path d="M1 6l4 4 8-9" stroke="#3e9a48" stroke-width="2" fill="none"/></svg>
<div class="t" style="left:1372px;top:84.2px;height:19px;line-height:19px;font-size:12.2px;color:#6e6e6e;">1</div>
<svg class="a" style="left:1388px;top:88px;" width="10" height="6" viewBox="0 0 10 6"><polyline points="1,5 5,1 9,5" fill="none" stroke="#555" stroke-width="1.3"/></svg>
<svg class="a" style="left:1408px;top:88px;" width="10" height="6" viewBox="0 0 10 6"><polyline points="1,1 5,5 9,1" fill="none" stroke="#555" stroke-width="1.3"/></svg>
<div class="a" style="left:1414px;top:283px;width:9px;height:140px;background:#e3e3e3;"></div>
<div class="a" style="left:1411px;top:138px;width:13px;height:2px;background:#d9cfae;"></div>
<div class="a" style="left:1411px;top:146px;width:13px;height:2px;background:#e4bd00;"></div>
<div class="a" style="left:1411px;top:180px;width:13px;height:2px;background:#d9cfae;"></div>
<div class="a" style="left:1411px;top:188px;width:13px;height:2px;background:#d9cfae;"></div>
<div class="a" style="left:1411px;top:256px;width:13px;height:2px;background:#d8e2ee;"></div>
<div class="a" style="left:1411px;top:262.6px;width:13px;height:2px;background:#d9cfae;"></div>
<div class="a" style="left:1411px;top:281px;width:13px;height:2px;background:#d9cfae;"></div>
<div class="a" style="left:1411px;top:297px;width:13px;height:2px;background:#c9c0a4;"></div>
<div class="a" style="left:1411px;top:305px;width:13px;height:2px;background:#c9c0a4;"></div>
<div class="a" style="left:1411px;top:331px;width:13px;height:2px;background:#c9c0a4;"></div>
<div class="a" style="left:1411px;top:338px;width:13px;height:2px;background:#c9c0a4;"></div>
<div class="a" style="left:1411px;top:346.7px;width:13px;height:2px;background:#2a56a8;"></div>
<div class="a" style="left:1411px;top:355.5px;width:13px;height:2px;background:#a48ae0;"></div>
<div class="a" style="left:440px;top:418px;width:356px;height:10px;background:#dcdcdc;"></div>
<div class="a" style="left:379px;top:428px;width:1045px;height:22px;background:#f2f2f2;"></div>
<div class="a" style="left:379px;top:427.5px;width:1045px;height:1px;background:#e6e6e6;"></div>
<div class="a" style="left:1424px;top:53px;width:16px;height:807px;background:#f2f2f2;"></div>
<div class="a" style="left:1424px;top:53px;width:1px;height:807px;background:#d6d6d6;"></div>
<svg class="a" style="left:1426px;top:64px;" width="13" height="13" viewBox="0 0 13 13"><rect width="13" height="13" fill="#7f5fc0"/><rect x="2" y="2" width="4" height="4" fill="#e24"/><rect x="7" y="7" width="4" height="4" fill="#2ad"/></svg>
<div class="t" style="left:1394.0px;top:110.5px;width:80px;height:18px;line-height:18px;font-size:11.6px;color:#1a1a1a;text-align:center;transform:rotate(90deg)">UML Generator</div>
<svg class="a" style="left:1427px;top:178px;" width="11" height="11" viewBox="0 0 11 11"><ellipse cx="5.5" cy="2.5" rx="5" ry="2" fill="none" stroke="#555"/><path d="M0.5 2.5v6c0 1.1 2.2 2 5 2s5-.9 5-2v-6M0.5 5.5c0 1.1 2.2 2 5 2s5-.9 5-2" fill="none" stroke="#555"/></svg>
<div class="t" style="left:1409.0px;top:210.5px;width:50px;height:18px;line-height:18px;font-size:11.6px;color:#1a1a1a;text-align:center;transform:rotate(90deg)">Database</div>
<svg class="a" style="left:1426px;top:264px;" width="14" height="14" viewBox="0 0 14 14"><circle cx="7" cy="7" r="6.5" fill="#1a8fe8"/><path d="M3.5 8a3.6 3.6 0 1 1 6.5 2" stroke="#fff" stroke-width="2" fill="none"/></svg>
<div class="t" style="left:1399.0px;top:305px;width:70px;height:18px;line-height:18px;font-size:11.6px;color:#1a1a1a;text-align:center;transform:rotate(90deg)"><span class="c" style="width:12px">百</span><span class="c" style="width:12px">度</span> Comate</div>
<svg class="a" style="left:1427px;top:370px;" width="11" height="11" viewBox="0 0 11 11"><path d="M1 1h2v2H1zM5 1h2v2H5zM9 1h2v2H9zM1 5h2v2H1zM5 5h2v2H5zM9 5h2v2H9zM1 9h2v2H1zM5 9h2v2H5zM9 9h2v2H9z" fill="#555"/></svg>
<div class="t" style="left:1411.0px;top:396px;width:46px;height:18px;line-height:18px;font-size:11.6px;color:#1a1a1a;text-align:center;transform:rotate(90deg)">SciView</div>
<svg class="a" style="left:1426px;top:447px;" width="14" height="14" viewBox="0 0 14 14"><circle cx="7" cy="7" r="6" fill="none" stroke="#222" stroke-width="1.6"/><circle cx="4.8" cy="7" r="1.6" fill="#222"/><circle cx="9.2" cy="7" r="1.6" fill="#222"/></svg>
<div class="t" style="left:1393.0px;top:493px;width:82px;height:18px;line-height:18px;font-size:11.6px;color:#1a1a1a;text-align:center;transform:rotate(90deg)">GitHub Copilot</div>
<div class="t" style="left:1427px;top:821.2px;height:16px;line-height:16px;font-size:11px;color:#333;font-weight:bold">M</div>
<div class="t" style="left:1424.0px;top:846px;width:20px;height:18px;line-height:18px;font-size:11.6px;color:#1a1a1a;text-align:center;transform:rotate(90deg)">ma</div>
<div class="a" style="left:19px;top:450px;width:1405px;height:27px;background:#e2e5ed;"></div>
<div class="a" style="left:19px;top:450px;width:1405px;height:1px;background:#d0d0d0;"></div>
<div class="t" style="left:25px;top:453.2px;height:25px;line-height:25px;font-size:12.3px;color:#1a1a1a;">Debug:</div>
<svg class="a" style="left:85px;top:456px;" width="17" height="17" viewBox="0 0 17 17"><path d="M6.5 0.8c-2.6 0-3 1.1-3 2.4v1.4h3.1v.6H2.3C1 5.2 0 6.1 0 8.1s.9 3 2.3 3h1.1V9.5c0-1.4 1.2-2.5 2.6-2.5h3.1c1.2 0 2.2-1 2.2-2.2V3.2c0-1.2-1-2.1-2.2-2.3-.8-.1-1.7-.1-2.6-.1z" fill="#3d7ebf"/><path d="M6.7 15.2c2.6 0 3-1.1 3-2.4v-1.4H6.6v-.6h4.3c1.3 0 2.300-.9 2.3-2.9s-.9-3-2.3-3H9.8v1.6c0 1.4-1.2 2.5-2.6 2.5H4.1c-1.2 0-2.2 1-2.2 2.2v1.6c0 1.2 1 2.1 2.2 2.3.8.1 1.7.1 2.6.1z" fill="#f5c33b"/><circle cx="13.5" cy="13.5" r="2.6" fill="#3fb34f"/></svg>
<div class="t" style="left:103px;top:453.2px;height:25px;line-height:25px;font-size:12.3px;color:#1a1a1a;">FaissVectorDBTest (1)</div>
<svg class="a" style="left:229px;top:460px;" width="9" height="9" viewBox="0 0 9 9"><path d="M1 1L8 8M8 1L1 8" stroke="#b5b5b5" stroke-width="1.1"/></svg>
<div class="a" style="left:72px;top:474.5px;width:175px;height:2.5px;background:#3b72c4;"></div>
<svg class="a" style="left:1380px;top:457px;" width="14" height="14" viewBox="0 0 14 14"><path d="M5.82 2.73 L6.07 1.34 L7.93 1.34 L8.18 2.73 L9.07 3.42 L10.11 3.84 L11.44 3.37 L12.37 4.97 L11.29 5.89 L11.13 7.00 L11.29 8.11 L12.37 9.03 L11.44 10.63 L10.11 10.16 L9.07 10.58 L8.18 11.27 L7.93 12.66 L6.07 12.66 L5.82 11.27 L4.93 10.58 L3.89 10.16 L2.56 10.63 L1.63 9.03 L2.71 8.11 L2.87 7.00 L2.71 5.89 L1.63 4.97 L2.56 3.37 L3.89 3.84 L4.93 3.42Z" fill="#6e6e6e"/><circle cx="7.0" cy="7.0" r="2.30" fill="#e2e5ed"/></svg>
<div class="a" style="left:1406px;top:463px;width:13px;height:1.6px;background:#6e6e6e;"></div>
<div class="a" style="left:19px;top:477px;width:1405px;height:26px;background:#f2f2f2;"></div>
<div class="a" style="left:19px;top:502.5px;width:1405px;height:1px;background:#dcdcdc;"></div>
<div class="a" style="left:19px;top:477px;width:28px;height:383px;background:#f2f2f2;"></div>
<div class="a" style="left:46px;top:477px;width:1px;height:383px;background:#dcdcdc;"></div>
<svg class="a" style="left:26px;top:483px;" width="15" height="16" viewBox="0 0 15 16"><path d="M12 6a5.5 5.5 0 1 0 0 5" stroke="#59a869" stroke-width="2" fill="none"/><path d="M9 1l5 4-5 3z" fill="#59a869"/><rect x="8" y="9" width="6" height="6" fill="#6e6e6e"/></svg>
<svg class="a" style="left:26px;top:508px;" width="15" height="15" viewBox="0 0 15 15"><path d="M10.5 1a3.5 3.5 0 0 0-3.2 4.7L1 12l2 2 6.3-6.3A3.5 3.5 0 0 0 14 4.5L12 6.5l-2-.5-.5-2z" fill="#6e6e6e"/></svg>
<div class="a" style="left:22px;top:530px;width:21px;height:1px;background:#dcdcdc;"></div>
<svg class="a" style="left:26px;top:540px;" width="14" height="13" viewBox="0 0 14 13"><rect x="1" y="1" width="3" height="11" fill="#59a869"/><path d="M6 1l7 5.5-7 5.5z" fill="#59a869"/></svg>
<svg class="a" style="left:27px;top:566px;" width="12" height="13" viewBox="0 0 12 13"><rect x="1" y="1" width="3" height="11" fill="#c9c9c9"/><rect x="7" y="1" width="3" height="11" fill="#c9c9c9"/></svg>
<div class="a" style="left:28px;top:593px;width:10px;height:10px;background:#db5860;"></div>
<div class="a" style="left:22px;top:612px;width:21px;height:1px;background:#dcdcdc;"></div>
<svg class="a" style="left:25px;top:621px;" width="16" height="15" viewBox="0 0 16 15"><circle cx="5.5" cy="9" r="5" fill="#db5860"/><circle cx="10.5" cy="5.5" r="5" fill="#db5860" stroke="#f2f2f2" stroke-width="1"/></svg>
<svg class="a" style="left:25px;top:647px;" width="16" height="16" viewBox="0 0 16 16"><circle cx="6" cy="9" r="4.5" fill="#e8a0a0"/><circle cx="10" cy="6" r="4.5" fill="#e8a0a0"/><path d="M2 14L14 2" stroke="#db5860" stroke-width="1.6"/></svg>
<div class="a" style="left:22px;top:670px;width:21px;height:1px;background:#dcdcdc;"></div>
<svg class="a" style="left:25px;top:675px;" width="15" height="15" viewBox="0 0 15 15"><path d="M6.24 2.94 L6.51 1.43 L8.49 1.43 L8.76 2.94 L9.71 3.67 L10.82 4.13 L12.26 3.61 L13.25 5.32 L12.08 6.31 L11.93 7.50 L12.08 8.69 L13.25 9.68 L12.26 11.39 L10.82 10.87 L9.71 11.33 L8.76 12.06 L8.49 13.57 L6.51 13.57 L6.24 12.06 L5.29 11.33 L4.18 10.87 L2.74 11.39 L1.75 9.68 L2.92 8.69 L3.07 7.50 L2.92 6.31 L1.75 5.32 L2.74 3.61 L4.18 4.13 L5.29 3.67Z" fill="#6e6e6e"/><circle cx="7.5" cy="7.5" r="2.46" fill="#f2f2f2"/></svg>
<svg class="a" style="left:36px;top:688px;" width="6" height="4" viewBox="0 0 6 4"><path d="M0 0h5l-2.5 3z" fill="#333"/></svg>
<div class="a" style="left:22px;top:703px;width:21px;height:1px;background:#dcdcdc;"></div>
<svg class="a" style="left:26px;top:709px;" width="15" height="16" viewBox="0 0 15 16"><path d="M9 1l5 5-2 1-3 3 1 3-1 1-7-7 1-1 3 1 3-3z" fill="#6e6e6e"/><path d="M5 10L1 14" stroke="#6e6e6e" stroke-width="1.6"/></svg>
<div class="t" style="left:60px;top:478.2px;height:26px;line-height:26px;font-size:12.3px;color:#1a1a1a;">Debugger</div>
<div class="a" style="left:47px;top:502px;width:76px;height:2.5px;background:#3b72c4;"></div>
<svg class="a" style="left:136px;top:485.5px;" width="11" height="10" viewBox="0 0 11 10"><rect width="11" height="10" fill="#6e6e6e"/><path d="M3.5 2.5l3 2.5-3 2.5" stroke="#fff" stroke-width="1.4" fill="none"/></svg>
<div class="t" style="left:153.5px;top:478.2px;height:26px;line-height:26px;font-size:11.9px;color:#1a1a1a;">Console</div>
<svg class="a" style="left:208px;top:485px;" width="14" height="12" viewBox="0 0 14 12"><rect y="0" width="12" height="2" fill="#6e6e6e"/><rect y="4.5" width="12" height="2" fill="#3d8fc0"/><rect y="9" width="12" height="2" fill="#6e6e6e"/></svg>
<div class="a" style="left:231px;top:481px;width:1px;height:17px;background:#d9d9d9;"></div>
<svg class="a" style="left:239px;top:481px;" width="16" height="18" viewBox="0 0 16 18"><path d="M1 9c2-4 5-5 8-2l2 2" stroke="#3d8fd1" stroke-width="1.8" fill="none"/><path d="M8 5h5v5z" fill="#3d8fd1"/><rect x="1" y="14" width="13" height="2" fill="#6e6e6e"/></svg>
<svg class="a" style="left:263px;top:481px;" width="16" height="18" viewBox="0 0 16 18"><path d="M8 1v8" stroke="#3d8fd1" stroke-width="2"/><path d="M3.5 7h9L8 11.5z" fill="#3d8fd1"/><rect x="1.5" y="14" width="13" height="2" fill="#6e6e6e"/></svg>
<svg class="a" style="left:288px;top:481px;" width="16" height="18" viewBox="0 0 16 18"><path d="M10 1v8" stroke="#3d8fd1" stroke-width="2"/><path d="M5.5 7h9L10 11.5z" fill="#3d8fd1"/><path d="M1 1h4M1 4h3M1 7h2" stroke="#d07a3a" stroke-width="1"/><rect x="1.5" y="14" width="13" height="2" fill="#6e6e6e"/></svg>
<svg class="a" style="left:314px;top:481px;" width="16" height="18" viewBox="0 0 16 18"><path d="M8 1v8" stroke="#c9c9c9" stroke-width="2"/><path d="M3.5 7h9L8 11.5z" fill="#c9c9c9"/><rect x="1.5" y="14" width="13" height="2" fill="#c9c9c9"/></svg>
<svg class="a" style="left:339px;top:481px;" width="16" height="18" viewBox="0 0 16 18"><path d="M8 4v8" stroke="#3d8fd1" stroke-width="2"/><path d="M3.5 6h9L8 1.5z" fill="#3d8fd1"/><rect x="1.5" y="14" width="13" height="2" fill="#6e6e6e"/></svg>
<svg class="a" style="left:364px;top:481px;" width="16" height="18" viewBox="0 0 16 18"><path d="M2 2l7 7" stroke="#3d8fd1" stroke-width="2"/><path d="M10 4v6H4z" fill="#3d8fd1"/><path d="M11 8h4M13 8v9M11 17h4" stroke="#555" stroke-width="1"/></svg>
<div class="a" style="left:388px;top:481px;width:1px;height:17px;background:#d9d9d9;"></div>
<svg class="a" style="left:397px;top:483px;" width="14" height="14" viewBox="0 0 14 14"><rect x="0.5" y="0.5" width="13" height="13" fill="#6e6e6e"/><rect x="2.5" y="2.5" width="9" height="2" fill="#fff"/><path d="M2.5 7h2v2h-2zM6 7h2v2H6zM9.5 7h2v2h-2zM2.5 10.3h2v2h-2zM6 10.3h2v2H6zM9.5 10.3h2v2h-2z" fill="#fff"/></svg>
<svg class="a" style="left:1405px;top:483px;" width="16" height="14" viewBox="0 0 16 14"><rect x="0" y="1" width="6" height="5" fill="#6e6e6e"/><rect x="7" y="1" width="6" height="5" fill="#6e6e6e"/><rect x="0" y="7" width="13" height="5" fill="#6e6e6e"/><path d="M12 11h4l-2 3z" fill="#333"/></svg>
<div class="a" style="left:47px;top:503px;width:281px;height:27px;background:#f2f2f2;"></div>
<div class="a" style="left:47px;top:529px;width:1377px;height:1px;background:#dcdcdc;"></div>
<div class="t" style="left:60px;top:504.2px;height:27px;line-height:27px;font-size:12.3px;color:#1a1a1a;">Frames</div>
<div class="a" style="left:327px;top:503px;width:1px;height:357px;background:#dcdcdc;"></div>
<div class="a" style="left:328px;top:503px;width:1096px;height:27px;background:#f2f2f2;"></div>
<div class="t" style="left:341px;top:504.2px;height:27px;line-height:27px;font-size:12.3px;color:#1a1a1a;">Variables</div>
<div class="a" style="left:47px;top:530px;width:280px;height:330px;background:#ffffff;"></div>
<div class="a" style="left:47px;top:530px;width:280px;height:31px;background:#f2f2f2;"></div>
<div class="a" style="left:50px;top:534px;width:219px;height:23px;background:#fff;border:1px solid #c4c4c4;border-radius:3px"></div>
<svg class="a" style="left:57px;top:539px;" width="13" height="13" viewBox="0 0 13 13"><circle cx="6.5" cy="6.5" r="5.8" fill="#f0895a"/></svg>
<div class="t" style="left:75px;top:535.2px;height:23px;line-height:23px;font-size:12.3px;color:#1a1a1a;">MainThread</div>
<svg class="a" style="left:254px;top:543px;" width="11" height="6" viewBox="0 0 11 6"><path d="M0 0h10l-5 5.5z" fill="#444"/></svg>
<svg class="a" style="left:281px;top:537px;" width="12" height="16" viewBox="0 0 12 16"><path d="M6 2v13M1.5 6.5L6 2l4.5 4.5" stroke="#c4c4c4" stroke-width="1.4" fill="none"/></svg>
<svg class="a" style="left:306px;top:537px;" width="12" height="16" viewBox="0 0 12 16"><path d="M6 1v13M1.5 9.5L6 14l4.5-4.5" stroke="#c4c4c4" stroke-width="1.4" fill="none"/></svg>
<div class="a" style="left:47px;top:561px;width:280px;height:20px;background:#2675bf;"></div>
<svg class="a" style="left:56px;top:564px;" width="13" height="13" viewBox="0 0 13 13"><rect x="0.5" y="0.5" width="8" height="8" fill="none" stroke="#c8dbef" stroke-width="1.1"/><rect x="3.5" y="3.5" width="9" height="9" fill="#2675bf" stroke="#c8dbef" stroke-width="1.1"/></svg>
<div class="t" style="left:73px;top:562.2px;height:20px;line-height:20px;font-size:12.3px;color:#ffffff;">&lt;module&gt;, FaissVectorDBTest.py:30</div>
<div class="a" style="left:328px;top:530px;width:24px;height:330px;background:#f2f2f2;"></div>
<div class="a" style="left:351.5px;top:530px;width:1px;height:330px;background:#e6e6e6;"></div>
<svg class="a" style="left:333px;top:537px;" width="12" height="12" viewBox="0 0 12 12"><path d="M6 1v10M1 6h10" stroke="#444" stroke-width="1.6"/></svg>
<div class="a" style="left:334px;top:567px;width:10px;height:1.5px;background:#c4c4c4;"></div>
<svg class="a" style="left:334px;top:588px;" width="11" height="7" viewBox="0 0 11 7"><path d="M0 6.5h10L5 0.5z" fill="#c9c9c9"/></svg>
<svg class="a" style="left:334px;top:614px;" width="11" height="7" viewBox="0 0 11 7"><path d="M0 0.5h10L5 6.5z" fill="#c9c9c9"/></svg>
<svg class="a" style="left:333px;top:636px;" width="13" height="14" viewBox="0 0 13 14"><path d="M1 11V1h8" stroke="#6e6e6e" stroke-width="1.4" fill="none"/><rect x="3.5" y="3.5" width="9" height="10" fill="#6e6e6e"/><path d="M5.5 6.5h5M5.5 9h5M5.5 11.5h5" stroke="#f2f2f2" stroke-width="1"/></svg>
<div class="a" style="left:330px;top:656px;width:20px;height:24px;background:#dedede;border-radius:3px"></div>
<svg class="a" style="left:331px;top:664px;" width="18" height="9" viewBox="0 0 18 9"><circle cx="4.3" cy="4.5" r="3.3" fill="none" stroke="#6e6e6e" stroke-width="1.6"/><circle cx="13.7" cy="4.5" r="3.3" fill="none" stroke="#6e6e6e" stroke-width="1.6"/><path d="M7.5 4h3" stroke="#6e6e6e" stroke-width="1.4"/></svg>
<div class="a" style="left:352px;top:530px;width:1063px;height:330px;background:#ffffff;"></div>
<div class="a" style="left:1415px;top:530px;width:9px;height:330px;background:#e8e8e8;"></div>
<div class="a" style="left:352px;top:530px;width:1073px;height:330px;overflow:hidden">
<div class="a" style="left:-352px;top:-530px;width:1440px;height:860px">
<svg class="a" style="left:359.0px;top:534.6px;" width="8" height="10" viewBox="0 0 8 10"><polyline points="2,1 6,5 2,9" fill="none" stroke="#6e6e6e" stroke-width="1.2"/></svg>
<svg class="a" style="left:378px;top:534.8px;" width="10" height="11" viewBox="0 0 10 11"><rect x="0" y="0" width="10" height="2.2" fill="#f2c77a"/><rect x="0" y="2.9" width="10" height="2.2" fill="#f2c77a"/><rect x="0" y="5.8" width="10" height="2.2" fill="#f2c77a"/><rect x="0" y="8.7" width="10" height="2.2" fill="#f2c77a"/></svg>
<div class="t vr" style="left:393.4px;top:531.2px;height:19.3px;line-height:19.3px;font-size:12px;color:#000;transform:scaleX(1.0071);transform-origin:0 0"><span style="color:#2020a8">FAISS</span><span style="color:#444"> = </span><span style="color:#9a9a9a">{ABCMeta}</span> <span style="color:#1a1a1a">&lt;class 'langchain_community.vectorstores.faiss.FAISS'&gt;</span></div>
<svg class="a" style="left:359.0px;top:553.9px;" width="8" height="10" viewBox="0 0 8 10"><polyline points="2,1 6,5 2,9" fill="none" stroke="#6e6e6e" stroke-width="1.2"/></svg>
<svg class="a" style="left:378px;top:554.0999999999999px;" width="10" height="11" viewBox="0 0 10 11"><rect x="0" y="0" width="10" height="2.2" fill="#f2c77a"/><rect x="0" y="2.9" width="10" height="2.2" fill="#f2c77a"/><rect x="0" y="5.8" width="10" height="2.2" fill="#f2c77a"/><rect x="0" y="8.7" width="10" height="2.2" fill="#f2c77a"/></svg>
<div class="t vr" style="left:393.4px;top:550.5px;height:19.3px;line-height:19.3px;font-size:12px;color:#000;transform:scaleX(1.0279);transform-origin:0 0"><span style="color:#2020a8">HuggingFaceEmbeddings</span><span style="color:#444"> = </span><span style="color:#9a9a9a">{ModelMetaclass}</span> <span style="color:#1a1a1a">&lt;class 'langchain_huggingface.embeddings.huggingface.HuggingFaceEmbeddings'&gt;</span></div>
<svg class="a" style="left:358.0px;top:574.4px;" width="10" height="8" viewBox="0 0 10 8"><polyline points="1,2 5,6 9,2" fill="none" stroke="#6e6e6e" stroke-width="1.2"/></svg>
<svg class="a" style="left:378px;top:573.4px;" width="10" height="11" viewBox="0 0 10 11"><rect x="0" y="0" width="10" height="2.2" fill="#f2c77a"/><rect x="0" y="2.9" width="10" height="2.2" fill="#f2c77a"/><rect x="0" y="5.8" width="10" height="2.2" fill="#f2c77a"/><rect x="0" y="8.7" width="10" height="2.2" fill="#f2c77a"/></svg>
<div class="t vr" style="left:393.4px;top:569.8px;height:19.3px;line-height:19.3px;font-size:12px;color:#000;transform:scaleX(1.0128);transform-origin:0 0"><span style="color:#2020a8">db</span><span style="color:#444"> = </span><span style="color:#9a9a9a">{FAISS}</span> <span style="color:#1a1a1a">&lt;langchain_community.vectorstores.faiss.FAISS object at 0x000001D8445DF9A0&gt;</span></div>
<div class="a" style="left:352px;top:587.9px;width:1072.5px;height:19.3px;background:#2675bf;"></div>
<svg class="a" style="left:394px;top:591.5px;" width="12" height="12" viewBox="0 0 12 12"><rect width="12" height="12" fill="#5aa0c8"/><text x="6" y="9.5" font-size="8.5" font-family="Liberation Sans" font-weight="bold" text-anchor="middle" fill="#d8ecf6">01</text></svg>
<div class="t vr" style="left:410.5px;top:589.1px;height:19.3px;line-height:19.3px;font-size:12px;color:#000;transform:scaleX(0.9996);transform-origin:0 0"><span style="color:#fff">distance_strategy</span><span style="color:#fff"> = </span><span style="color:#fff">{DistanceStrategy}</span> <span style="color:#fff">DistanceStrategy.EUCLIDEAN_DISTANCE</span></div>
<svg class="a" style="left:375.5px;top:611.8000000000001px;" width="8" height="10" viewBox="0 0 8 10"><polyline points="2,1 6,5 2,9" fill="none" stroke="#6e6e6e" stroke-width="1.2"/></svg>
<svg class="a" style="left:395px;top:612.0px;" width="10" height="11" viewBox="0 0 10 11"><rect x="0" y="0" width="10" height="2.2" fill="#f2c77a"/><rect x="0" y="2.9" width="10" height="2.2" fill="#f2c77a"/><rect x="0" y="5.8" width="10" height="2.2" fill="#f2c77a"/><rect x="0" y="8.7" width="10" height="2.2" fill="#f2c77a"/></svg>
<div class="t vr" style="left:410.5px;top:608.4px;height:19.3px;line-height:19.3px;font-size:12px;color:#000;transform:scaleX(1.0401);transform-origin:0 0"><span style="color:#871e1e">docstore</span><span style="color:#444"> = </span><span style="color:#9a9a9a">{InMemoryDocstore}</span> <span style="color:#1a1a1a">&lt;langchain_community.docstore.in_memory.InMemoryDocstore object at 0x000001D8426DD280&gt;</span></div>
<svg class="a" style="left:375.5px;top:631.1px;" width="8" height="10" viewBox="0 0 8 10"><polyline points="2,1 6,5 2,9" fill="none" stroke="#6e6e6e" stroke-width="1.2"/></svg>
<svg class="a" style="left:395px;top:631.3px;" width="10" height="11" viewBox="0 0 10 11"><rect x="0" y="0" width="10" height="2.2" fill="#f2c77a"/><rect x="0" y="2.9" width="10" height="2.2" fill="#f2c77a"/><rect x="0" y="5.8" width="10" height="2.2" fill="#f2c77a"/><rect x="0" y="8.7" width="10" height="2.2" fill="#f2c77a"/></svg>
<div class="a" style="left:410.5px;top:626.5px;width:974.0px;height:19.3px;overflow:hidden">
<div class="t vr" style="left:0px;top:1.2px;height:19.3px;line-height:19.3px;font-size:12px;color:#000;transform:scaleX(1.0255);transform-origin:0 0"><span style="color:#871e1e">embedding_function</span><span style="color:#444"> = </span><span style="color:#9a9a9a">{HuggingFaceEmbeddings}</span> <span style="color:#1a1a1a">client=SentenceTransformer(</span><span style="color:#3a50b0">\n</span><span style="color:#1a1a1a">  (0): Transformer({'max_seq_length': 256, 'do_lower_case': False}) with Transformer model: Bert</span></div>
</div>
<div class="t" style="left:1385px;top:627.7px;height:19.3px;line-height:19.3px;font-size:12px;color:#000;"><span style="color:#9a9a9a">...</span> <span style="color:#84a7cc">View</span></div>
<svg class="a" style="left:375.5px;top:650.4px;" width="8" height="10" viewBox="0 0 8 10"><polyline points="2,1 6,5 2,9" fill="none" stroke="#6e6e6e" stroke-width="1.2"/></svg>
<svg class="a" style="left:395px;top:650.5999999999999px;" width="10" height="11" viewBox="0 0 10 11"><rect x="0" y="0" width="10" height="2.2" fill="#f2c77a"/><rect x="0" y="2.9" width="10" height="2.2" fill="#f2c77a"/><rect x="0" y="5.8" width="10" height="2.2" fill="#f2c77a"/><rect x="0" y="8.7" width="10" height="2.2" fill="#f2c77a"/></svg>
<div class="a" style="left:410.5px;top:645.8px;width:974.0px;height:19.3px;overflow:hidden">
<div class="t vr" style="left:0px;top:1.2px;height:19.3px;line-height:19.3px;font-size:12px;color:#000;transform:scaleX(1.0292);transform-origin:0 0"><span style="color:#871e1e">embeddings</span><span style="color:#444"> = </span><span style="color:#9a9a9a">{HuggingFaceEmbeddings}</span> <span style="color:#1a1a1a">client=SentenceTransformer(</span><span style="color:#3a50b0">\n</span><span style="color:#1a1a1a">  (0): Transformer({'max_seq_length': 256, 'do_lower_case': False}) with Transformer model: BertModel </span><span style="color:#3a50b0">\</span></div>
</div>
<div class="t" style="left:1385px;top:647.0px;height:19.3px;line-height:19.3px;font-size:12px;color:#000;"><span style="color:#9a9a9a">...</span> <span style="color:#84a7cc">View</span></div>
<svg class="a" style="left:375.5px;top:669.7px;" width="8" height="10" viewBox="0 0 8 10"><polyline points="2,1 6,5 2,9" fill="none" stroke="#6e6e6e" stroke-width="1.2"/></svg>
<svg class="a" style="left:395px;top:669.9px;" width="10" height="11" viewBox="0 0 10 11"><rect x="0" y="0" width="10" height="2.2" fill="#f2c77a"/><rect x="0" y="2.9" width="10" height="2.2" fill="#f2c77a"/><rect x="0" y="5.8" width="10" height="2.2" fill="#f2c77a"/><rect x="0" y="8.7" width="10" height="2.2" fill="#f2c77a"/></svg>
<div class="t vr" style="left:410.5px;top:666.3px;height:19.3px;line-height:19.3px;font-size:12px;color:#000;transform:scaleX(1.0153);transform-origin:0 0"><span style="color:#871e1e">index</span><span style="color:#444"> = </span><span style="color:#9a9a9a">{IndexFlatL2}</span> <span style="color:#1a1a1a">&lt;faiss.swigfaiss_avx2.IndexFlatL2; proxy of &lt;Swig Object of type 'faiss::IndexFlatL2 *' at 0x000001D8426DD1B0&gt; &gt;</span></div>
<svg class="a" style="left:375.5px;top:689.0px;" width="8" height="10" viewBox="0 0 8 10"><polyline points="2,1 6,5 2,9" fill="none" stroke="#6e6e6e" stroke-width="1.2"/></svg>
<svg class="a" style="left:395px;top:689.1999999999999px;" width="10" height="11" viewBox="0 0 10 11"><rect x="0" y="0" width="10" height="2.2" fill="#f2c77a"/><rect x="0" y="2.9" width="10" height="2.2" fill="#f2c77a"/><rect x="0" y="5.8" width="10" height="2.2" fill="#f2c77a"/><rect x="0" y="8.7" width="10" height="2.2" fill="#f2c77a"/></svg>
<div class="a" style="left:410.5px;top:684.4px;width:974.0px;height:19.3px;overflow:hidden">
<div class="t vr" style="left:0px;top:1.2px;height:19.3px;line-height:19.3px;font-size:12px;color:#000;transform:scaleX(1.0271);transform-origin:0 0"><span style="color:#871e1e">index_to_docstore_id</span><span style="color:#444"> = </span><span style="color:#9a9a9a">{dict: 5}</span> <span style="color:#1a1a1a">{0: '4dbeb3cf-8c09-43ec-aa80-ee88b97753d7', 1: '1206fb92-d6df-4f78-9b75-4892199df5ce', 2: 'a30314bc-708b-4c85-94e1-56d4cf2b872a', 3: '02c</span></div>
</div>
<div class="t" style="left:1385px;top:685.6px;height:19.3px;line-height:19.3px;font-size:12px;color:#000;"><span style="color:#9a9a9a">...</span> <span style="color:#84a7cc">View</span></div>
<svg class="a" style="left:394px;top:707.3000000000001px;" width="12" height="12" viewBox="0 0 12 12"><rect width="12" height="12" fill="#9fd3ea"/><text x="6" y="9.5" font-size="8.5" font-family="Liberation Sans" font-weight="bold" text-anchor="middle" fill="#2f6f8f">01</text></svg>
<div class="t vr" style="left:410.5px;top:704.9px;height:19.3px;line-height:19.3px;font-size:12px;color:#000;transform:scaleX(1.0251);transform-origin:0 0"><span style="color:#871e1e">override_relevance_score_fn</span><span style="color:#444"> = </span><span style="color:#9a9a9a">{NoneType}</span> <span style="color:#1a1a1a">None</span></div>
<svg class="a" style="left:375.5px;top:727.6px;" width="8" height="10" viewBox="0 0 8 10"><polyline points="2,1 6,5 2,9" fill="none" stroke="#6e6e6e" stroke-width="1.2"/></svg>
<svg class="a" style="left:396px;top:727.0px;" width="9" height="12" viewBox="0 0 9 12"><circle cx="4.5" cy="3.2" r="2.4" fill="none" stroke="#9a9a9a" stroke-width="1.3"/><path d="M4.5 5.5v6M4.5 8.5h2M4.5 10.5h2" stroke="#9a9a9a" stroke-width="1.2"/></svg>
<div class="t vr" style="left:410.5px;top:724.2px;height:19.3px;line-height:19.3px;font-size:12px;color:#000;transform:scaleX(1.0694);transform-origin:0 0"><span style="color:#1a1a1a">Protected Attributes</span></div>
<svg class="a" style="left:359.0px;top:746.9px;" width="8" height="10" viewBox="0 0 8 10"><polyline points="2,1 6,5 2,9" fill="none" stroke="#6e6e6e" stroke-width="1.2"/></svg>
<svg class="a" style="left:378px;top:747.0999999999999px;" width="10" height="11" viewBox="0 0 10 11"><rect x="0" y="0" width="10" height="2.2" fill="#f2c77a"/><rect x="0" y="2.9" width="10" height="2.2" fill="#f2c77a"/><rect x="0" y="5.8" width="10" height="2.2" fill="#f2c77a"/><rect x="0" y="8.7" width="10" height="2.2" fill="#f2c77a"/></svg>
<div class="a" style="left:393.4px;top:742.3px;width:991.1px;height:19.3px;overflow:hidden">
<div class="t vr" style="left:0px;top:1.2px;height:19.3px;line-height:19.3px;font-size:12px;color:#000;transform:scaleX(1.0284);transform-origin:0 0"><span style="color:#2020a8">embeddings</span><span style="color:#444"> = </span><span style="color:#9a9a9a">{HuggingFaceEmbeddings}</span> <span style="color:#1a1a1a">client=SentenceTransformer(</span><span style="color:#3a50b0">\n</span><span style="color:#1a1a1a">  (0): Transformer({'max_seq_length': 256, 'do_lower_case': False}) with Transformer model: BertModel </span><span style="color:#3a50b0">\n</span><span style="color:#1a1a1a">  (</span></div>
</div>
<div class="t" style="left:1385px;top:743.5px;height:19.3px;line-height:19.3px;font-size:12px;color:#000;"><span style="color:#9a9a9a">...</span> <span style="color:#84a7cc">View</span></div>
<svg class="a" style="left:359.0px;top:766.2px;" width="8" height="10" viewBox="0 0 8 10"><polyline points="2,1 6,5 2,9" fill="none" stroke="#6e6e6e" stroke-width="1.2"/></svg>
<svg class="a" style="left:378px;top:766.4px;" width="10" height="11" viewBox="0 0 10 11"><rect x="0" y="0" width="10" height="2.2" fill="#f2c77a"/><rect x="0" y="2.9" width="10" height="2.2" fill="#f2c77a"/><rect x="0" y="5.8" width="10" height="2.2" fill="#f2c77a"/><rect x="0" y="8.7" width="10" height="2.2" fill="#f2c77a"/></svg>
<div class="a" style="left:393.4px;top:761.6px;width:991.1px;height:19.3px;overflow:hidden">
<div class="t vr" style="left:0px;top:1.2px;height:19.3px;line-height:19.3px;font-size:12px;color:#000;transform:scaleX(1.0226);transform-origin:0 0"><span style="color:#2020a8">model</span><span style="color:#444"> = </span><span style="color:#9a9a9a">{SentenceTransformer: 3}</span> <span style="color:#1a1a1a">SentenceTransformer(</span><span style="color:#3a50b0">\n</span><span style="color:#1a1a1a">  (0): Transformer({'max_seq_length': 256, 'do_lower_case': False}) with Transformer model: BertModel </span><span style="color:#3a50b0">\n</span><span style="color:#1a1a1a">  (1): Pooling({'wc</span></div>
</div>
<div class="t" style="left:1385px;top:762.8px;height:19.3px;line-height:19.3px;font-size:12px;color:#000;"><span style="color:#9a9a9a">...</span> <span style="color:#84a7cc">View</span></div>
<svg class="a" style="left:377px;top:784.5px;" width="12" height="12" viewBox="0 0 12 12"><rect width="12" height="12" fill="#9fd3ea"/><text x="6" y="9.5" font-size="8.5" font-family="Liberation Sans" font-weight="bold" text-anchor="middle" fill="#2f6f8f">01</text></svg>
<div class="t vr" style="left:393.4px;top:782.1px;height:19.3px;line-height:19.3px;font-size:12px;color:#000;transform:scaleX(1.0590);transform-origin:0 0"><span style="color:#2020a8">model_path</span><span style="color:#444"> = </span><span style="color:#9a9a9a">{str}</span> <span style="color:#1a1a1a">'../model/all-MiniLM-L6-v2/'</span></div>
<svg class="a" style="left:377px;top:803.8000000000001px;" width="12" height="12" viewBox="0 0 12 12"><rect width="12" height="12" fill="#9fd3ea"/><text x="6" y="9.5" font-size="8.5" font-family="Liberation Sans" font-weight="bold" text-anchor="middle" fill="#2f6f8f">01</text></svg>
<div class="t vr" style="left:393.4px;top:801.4px;height:19.3px;line-height:19.3px;font-size:12px;color:#000;transform:scaleX(0.9939);transform-origin:0 0"><span style="color:#2020a8">query</span><span style="color:#444"> = </span><span style="color:#9a9a9a">{str}</span> <span style="color:#1a1a1a">'<span class="c" style="width:12px">信</span><span class="c" style="width:12px">息</span><span class="c" style="width:12px">中</span><span class="c" style="width:12px">与</span><span class="c" style="width:12px">名</span><span class="c" style="width:12px">字</span><span class="c" style="width:12px">相</span><span class="c" style="width:12px">关</span><span class="c" style="width:12px">的</span><span class="c" style="width:12px">有</span><span class="c" style="width:12px">哪</span><span class="c" style="width:12px">些</span><span class="c" style="width:12px">？</span>'</span></div>
<svg class="a" style="left:359.0px;top:824.1px;" width="8" height="10" viewBox="0 0 8 10"><polyline points="2,1 6,5 2,9" fill="none" stroke="#6e6e6e" stroke-width="1.2"/></svg>
<svg class="a" style="left:378px;top:824.3px;" width="10" height="11" viewBox="0 0 10 11"><rect x="0" y="0" width="10" height="2.2" fill="#f2c77a"/><rect x="0" y="2.9" width="10" height="2.2" fill="#f2c77a"/><rect x="0" y="5.8" width="10" height="2.2" fill="#f2c77a"/><rect x="0" y="8.7" width="10" height="2.2" fill="#f2c77a"/></svg>
<div class="a" style="left:393.4px;top:819.5px;width:991.1px;height:19.3px;overflow:hidden">
<div class="t vr" style="left:0px;top:1.2px;height:19.3px;line-height:19.3px;font-size:12px;color:#000;transform:scaleX(1.0242);transform-origin:0 0"><span style="color:#2020a8">retriever</span><span style="color:#444"> = </span><span style="color:#9a9a9a">{VectorStoreRetriever}</span> <span style="color:#1a1a1a">tags=['FAISS', 'HuggingFaceEmbeddings'] vectorstore=&lt;langchain_community.vectorstores.faiss.FAISS object at 0x000001D8445DF9A0&gt; search_k</span></div>
</div>
<div class="t" style="left:1385px;top:820.7px;height:19.3px;line-height:19.3px;font-size:12px;color:#000;"><span style="color:#9a9a9a">...</span> <span style="color:#84a7cc">View</span></div>
<svg class="a" style="left:359.0px;top:843.4px;" width="8" height="10" viewBox="0 0 8 10"><polyline points="2,1 6,5 2,9" fill="none" stroke="#6e6e6e" stroke-width="1.2"/></svg>
<svg class="a" style="left:377px;top:841.8px;" width="13" height="14" viewBox="0 0 13 14"><path d="M1 1v3M0 8h2v1H0v2h2M0 13h2" stroke="#f0a030" stroke-width="0.9" fill="none"/><rect x="4" y="1" width="9" height="2" fill="#3d8fd1"/><rect x="4" y="5" width="9" height="2" fill="#3d8fd1"/><rect x="4" y="9" width="9" height="2" fill="#3d8fd1"/><rect x="4" y="13" width="9" height="1.5" fill="#3d8fd1"/></svg>
<div class="t vr" style="left:393.4px;top:840.0px;height:19.3px;line-height:19.3px;font-size:12px;color:#000;transform:scaleX(0.9786);transform-origin:0 0"><span style="color:#2020a8">texts</span><span style="color:#444"> = </span><span style="color:#9a9a9a">{list: 5}</span> <span style="color:#1a1a1a">['<span class="c" style="width:12px">我</span><span class="c" style="width:12px">叫</span><span class="c" style="width:12px">王</span><span class="c" style="width:12px">巍</span><span class="c" style="width:12px">巍</span>', '<span class="c" style="width:12px">我</span><span class="c" style="width:12px">目</span><span class="c" style="width:12px">前</span><span class="c" style="width:12px">就</span><span class="c" style="width:12px">职</span><span class="c" style="width:12px">于</span><span class="c" style="width:12px">一</span><span class="c" style="width:12px">家</span><span class="c" style="width:12px">金</span><span class="c" style="width:12px">融</span><span class="c" style="width:12px">服</span><span class="c" style="width:12px">务</span><span class="c" style="width:12px">公</span><span class="c" style="width:12px">司</span>', '<span class="c" style="width:12px">我</span><span class="c" style="width:12px">是</span><span class="c" style="width:12px">一</span><span class="c" style="width:12px">名</span>AI<span class="c" style="width:12px">从</span><span class="c" style="width:12px">业</span><span class="c" style="width:12px">人</span><span class="c" style="width:12px">员</span>', '<span class="c" style="width:12px">我</span><span class="c" style="width:12px">热</span><span class="c" style="width:12px">爱</span><span class="c" style="width:12px">探</span><span class="c" style="width:12px">索</span><span class="c" style="width:12px">一</span><span class="c" style="width:12px">切</span><span class="c" style="width:12px">未</span><span class="c" style="width:12px">知</span><span class="c" style="width:12px">的</span><span class="c" style="width:12px">东</span><span class="c" style="width:12px">西</span>', '<span class="c" style="width:12px">我</span><span class="c" style="width:12px">在</span><span class="c" style="width:12px">研</span><span class="c" style="width:12px">究</span>Faiss<span class="c" style="width:12px">向</span><span class="c" style="width:12px">量</span><span class="c" style="width:12px">数</span><span class="c" style="width:12px">据</span><span class="c" style="width:12px">库</span>']</span></div>
</div></div>
<svg class="a" style="left:960px;top:774px;" width="275" height="50" viewBox="0 0 275 50"><g stroke="rgba(150,150,150,0.72)" stroke-width="3" fill="none" stroke-linecap="butt"><path d="M11 5l-5 9M7 13h15M4 25h19M14 13v12M14 25l-10 17M15 27l9 13M27.5 14.5h10v23h-10z"/><path d="M52 10l30-4M57 14l4 6M78 13l-4 7M49 26h39M68 8v31c0 3-3 4-8 3"/><path d="M152 8h31M154 24.5h27M150 41h35M167.5 8v33"/><path transform="translate(0,4.5) scale(1,0.9)" d="M193 4v7h35v-7M210.5 1v10M193 17l8-2M197 15v27M192 26h10M193 38l5-6M204 18h10v10h-10zM209 29l-5 12M209 37l6-3M218 17h10v11h-10zM223 28l-4 13M224 37l5 6M205 23h9M219 22.5h9M233.5 4v7h35v-7M251.0 1v10M233.5 17l8-2M237.5 15v27M232.5 26h10M233.5 38l5-6M244.5 18h10v10h-10zM249.5 29l-5 12M249.5 37l6-3M258.5 17h10v11h-10zM263.5 28l-4 13M264.5 37l5 6M245.5 23h9M259.5 22.5h9"/></g></svg>
<div class="t" style="left:1068px;top:773px;height:50px;line-height:50px;font-size:41px;color:rgba(150,150,150,0.72)">@</div>
<div class="t" style="left:1230.5px;top:774px;height:50px;line-height:50px;font-size:42px;letter-spacing:-0.5px;color:rgba(150,150,150,0.72)">(Charles)</div>
</body></html>
